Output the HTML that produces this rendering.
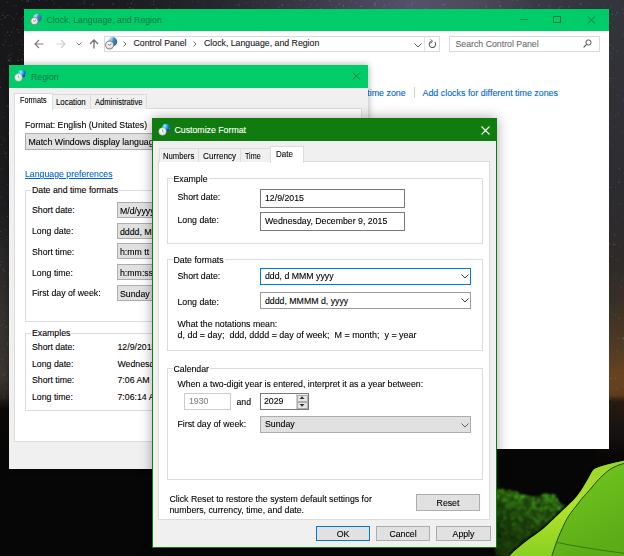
<!DOCTYPE html>
<html><head><meta charset="utf-8">
<style>
*{box-sizing:border-box;margin:0;padding:0}
html,body{width:624px;height:556px;overflow:hidden;background:#060606}
body{position:relative;font-family:"Liberation Sans",sans-serif;font-size:8.75px;color:#000}
.a{position:absolute}
.t{position:absolute;white-space:nowrap;line-height:11px;-webkit-text-stroke:0.1px currentColor}
.gb{position:absolute;border:1px solid #dcdcdc}
.gl{position:absolute;background:#fff;padding:0 1px;line-height:11px;white-space:nowrap}
.cb{position:absolute;border:1px solid #adadad;background:#e1e1e1;overflow:hidden;white-space:nowrap;line-height:15px;padding-left:3px}
.tb{position:absolute;border:1px solid #7a7a7a;background:#fff;white-space:nowrap;line-height:18px;padding-left:4px}
.btn{position:absolute;border:1px solid #adadad;background:#e1e1e1;text-align:center;line-height:14px}
svg{position:absolute;overflow:visible}
.gl,.cb,.tb,.btn{-webkit-text-stroke:0.1px currentColor}
</style></head><body>

<svg width="0" height="0" style="left:0;top:0">
  <defs>
    <radialGradient id="gv" cx="0.3" cy="0.3" r="0.85"><stop offset="0" stop-color="#a8ffff"/><stop offset="0.35" stop-color="#30b8e8"/><stop offset="0.75" stop-color="#2050c8"/><stop offset="1" stop-color="#183a90"/></radialGradient>
    <linearGradient id="gs" x1="0" y1="0.2" x2="1" y2="0.6"><stop offset="0" stop-color="#d0e8f4"/><stop offset="0.4" stop-color="#8ec0e0"/><stop offset="0.55" stop-color="#3a88c0"/><stop offset="1" stop-color="#2a6a9a"/></linearGradient>
    <radialGradient id="gc" cx="0.4" cy="0.35" r="0.7"><stop offset="0" stop-color="#ffffff"/><stop offset="1" stop-color="#d8d8d8"/></radialGradient>
    <linearGradient id="tent" x1="0" y1="0" x2="0.6" y2="1"><stop offset="0" stop-color="#7ccc22"/><stop offset="0.5" stop-color="#6cbe1c"/><stop offset="1" stop-color="#5cac18"/></linearGradient>
    <linearGradient id="ridge" x1="0" y1="0" x2="0" y2="1"><stop offset="0" stop-color="#9ad42a"/><stop offset="0.5" stop-color="#b2e22c"/><stop offset="1" stop-color="#88d020"/></linearGradient>
    <filter id="blur1"><feGaussianBlur stdDeviation="1.2"/></filter><filter id="blur08"><feGaussianBlur stdDeviation="0.7"/></filter><filter id="blur03"><feGaussianBlur stdDeviation="0.35"/></filter><filter id="blur05"><feGaussianBlur stdDeviation="0.5"/></filter>
    <filter id="blur3"><feGaussianBlur stdDeviation="3"/></filter>
  </defs>
</svg>

<!-- ============ background ============ -->
<div class="a" style="left:0;top:0;width:624px;height:40px;background:linear-gradient(90deg,#141418 0%,#1a1a20 18%,#26262e 35%,#3c3a48 50%,#56506a 66%,#4e4a5a 76%,#3a3a46 86%,#30303a 100%)"></div>
<div class="a" style="left:0;top:0;width:24px;height:470px;background:linear-gradient(180deg,#161618 0%,#1e1e20 45%,#2a2828 55%,#36322e 70%,#3c3530 80%,#2e2822 84%,#0c0a08 87%,#060606 100%)"></div>
<div class="a" style="left:596px;top:0;width:28px;height:470px;background:linear-gradient(180deg,#34343c 0%,#2c2c30 40%,#2e2a28 55%,#3a3026 65%,#503a24 74%,#684420 80%,#5e3c1c 84%,#261a10 85.5%,#161210 92%,#080706 97%)"></div>
<svg style="left:0;top:0" width="624" height="556" viewBox="0 0 624 556">
  <path d="M496 491 L505 490 L515 493 L530 497 L545 495 L553 495 L560 504 L570 510 L540 556 L496 556 Z" fill="#1e340e" filter="url(#blur1)"/>
  <g filter="url(#blur1)"><circle cx="520.0" cy="496.7" r="1.6" fill="rgb(32,76,11)"/><circle cx="511.9" cy="492.1" r="1.4" fill="rgb(41,99,14)"/><circle cx="502.7" cy="516.1" r="1.8" fill="rgb(24,57,8)"/><circle cx="512.4" cy="525.5" r="1.0" fill="rgb(30,71,10)"/><circle cx="506.7" cy="494.4" r="1.2" fill="rgb(69,165,24)"/><circle cx="538.3" cy="499.3" r="1.0" fill="rgb(64,154,23)"/><circle cx="500.6" cy="490.2" r="1.1" fill="rgb(66,157,23)"/><circle cx="522.8" cy="503.6" r="1.1" fill="rgb(63,150,22)"/><circle cx="514.1" cy="526.8" r="1.5" fill="rgb(27,64,9)"/><circle cx="550.0" cy="506.4" r="2.0" fill="rgb(30,72,10)"/><circle cx="533.9" cy="497.7" r="1.3" fill="rgb(54,129,19)"/><circle cx="501.7" cy="525.6" r="1.8" fill="rgb(40,97,14)"/><circle cx="519.2" cy="535.4" r="1.6" fill="rgb(30,72,10)"/><circle cx="502.9" cy="505.2" r="1.7" fill="rgb(26,63,9)"/><circle cx="500.5" cy="535.8" r="1.6" fill="rgb(32,78,11)"/><circle cx="556.8" cy="506.2" r="1.3" fill="rgb(59,142,21)"/><circle cx="522.3" cy="529.4" r="1.4" fill="rgb(23,55,8)"/><circle cx="552.8" cy="495.2" r="1.2" fill="rgb(50,119,17)"/><circle cx="508.3" cy="514.5" r="1.2" fill="rgb(25,61,9)"/><circle cx="516.6" cy="515.5" r="1.3" fill="rgb(35,85,12)"/><circle cx="509.0" cy="502.5" r="1.2" fill="rgb(47,113,17)"/><circle cx="516.9" cy="496.3" r="1.5" fill="rgb(59,142,21)"/><circle cx="547.1" cy="522.6" r="1.6" fill="rgb(42,102,15)"/><circle cx="550.7" cy="518.4" r="1.9" fill="rgb(46,111,16)"/><circle cx="555.0" cy="513.9" r="1.3" fill="rgb(27,66,9)"/><circle cx="531.6" cy="514.4" r="1.1" fill="rgb(31,74,11)"/><circle cx="537.9" cy="524.1" r="1.9" fill="rgb(40,95,14)"/><circle cx="497.9" cy="548.1" r="1.6" fill="rgb(18,44,6)"/><circle cx="540.6" cy="519.7" r="1.0" fill="rgb(38,92,13)"/><circle cx="503.6" cy="510.3" r="1.2" fill="rgb(49,118,17)"/><circle cx="506.8" cy="524.6" r="0.9" fill="rgb(33,78,11)"/><circle cx="518.1" cy="531.6" r="1.0" fill="rgb(22,54,8)"/><circle cx="522.3" cy="501.8" r="1.5" fill="rgb(51,122,18)"/><circle cx="520.4" cy="501.8" r="1.8" fill="rgb(63,151,22)"/><circle cx="512.8" cy="522.8" r="1.3" fill="rgb(19,45,6)"/><circle cx="530.9" cy="499.7" r="1.6" fill="rgb(46,109,16)"/><circle cx="523.0" cy="501.7" r="1.1" fill="rgb(36,87,13)"/><circle cx="521.0" cy="520.3" r="2.0" fill="rgb(42,100,15)"/><circle cx="502.3" cy="532.9" r="1.9" fill="rgb(35,85,12)"/><circle cx="548.7" cy="500.2" r="1.9" fill="rgb(49,116,17)"/><circle cx="554.4" cy="509.6" r="1.8" fill="rgb(57,136,20)"/><circle cx="525.3" cy="514.5" r="1.9" fill="rgb(52,124,18)"/><circle cx="507.8" cy="556.5" r="0.9" fill="rgb(30,72,10)"/><circle cx="506.8" cy="544.7" r="2.0" fill="rgb(32,77,11)"/><circle cx="503.6" cy="539.2" r="1.1" fill="rgb(19,47,7)"/><circle cx="557.1" cy="501.0" r="1.2" fill="rgb(44,106,15)"/><circle cx="520.1" cy="524.6" r="1.8" fill="rgb(20,47,7)"/><circle cx="563.3" cy="511.1" r="1.4" fill="rgb(56,135,20)"/><circle cx="505.7" cy="496.8" r="1.5" fill="rgb(48,115,17)"/><circle cx="553.4" cy="496.6" r="1.1" fill="rgb(61,146,22)"/><circle cx="520.1" cy="522.8" r="1.5" fill="rgb(46,109,16)"/><circle cx="500.2" cy="499.6" r="0.9" fill="rgb(30,72,10)"/><circle cx="533.6" cy="525.9" r="1.7" fill="rgb(20,49,7)"/><circle cx="528.8" cy="529.5" r="1.5" fill="rgb(33,79,11)"/><circle cx="510.8" cy="505.7" r="1.5" fill="rgb(59,142,21)"/><circle cx="505.0" cy="517.4" r="1.0" fill="rgb(27,65,9)"/><circle cx="527.7" cy="501.1" r="1.2" fill="rgb(33,79,11)"/><circle cx="506.6" cy="548.7" r="2.0" fill="rgb(20,49,7)"/><circle cx="545.4" cy="501.9" r="1.7" fill="rgb(51,123,18)"/><circle cx="525.9" cy="515.9" r="1.3" fill="rgb(25,60,9)"/><circle cx="537.0" cy="517.3" r="0.9" fill="rgb(34,82,12)"/><circle cx="534.3" cy="507.0" r="2.0" fill="rgb(30,72,10)"/><circle cx="553.6" cy="505.2" r="1.0" fill="rgb(45,109,16)"/><circle cx="535.7" cy="522.5" r="1.4" fill="rgb(31,74,11)"/><circle cx="502.6" cy="490.1" r="1.7" fill="rgb(52,124,18)"/><circle cx="562.3" cy="505.1" r="0.9" fill="rgb(34,81,12)"/><circle cx="521.1" cy="525.3" r="1.9" fill="rgb(26,64,9)"/><circle cx="509.4" cy="552.2" r="1.6" fill="rgb(28,68,10)"/><circle cx="552.2" cy="506.6" r="1.5" fill="rgb(33,78,11)"/><circle cx="516.0" cy="543.1" r="2.0" fill="rgb(15,37,5)"/><circle cx="497.1" cy="538.0" r="1.5" fill="rgb(19,47,7)"/><circle cx="534.1" cy="503.4" r="1.4" fill="rgb(59,140,21)"/><circle cx="556.6" cy="516.7" r="1.4" fill="rgb(39,94,14)"/><circle cx="511.9" cy="502.3" r="1.1" fill="rgb(58,139,20)"/><circle cx="549.9" cy="495.9" r="2.0" fill="rgb(31,75,11)"/><circle cx="545.2" cy="513.0" r="1.5" fill="rgb(34,82,12)"/><circle cx="499.3" cy="499.2" r="1.2" fill="rgb(26,62,9)"/><circle cx="518.9" cy="511.3" r="0.9" fill="rgb(38,92,13)"/><circle cx="502.2" cy="505.8" r="1.6" fill="rgb(34,81,12)"/><circle cx="515.5" cy="492.4" r="1.3" fill="rgb(31,75,11)"/><circle cx="525.2" cy="507.3" r="1.6" fill="rgb(28,68,10)"/><circle cx="539.3" cy="523.6" r="1.7" fill="rgb(42,100,15)"/><circle cx="549.3" cy="521.1" r="1.2" fill="rgb(42,100,15)"/><circle cx="534.8" cy="521.8" r="1.8" fill="rgb(49,117,17)"/><circle cx="497.2" cy="534.7" r="1.8" fill="rgb(33,80,12)"/><circle cx="505.8" cy="511.6" r="1.0" fill="rgb(39,93,13)"/><circle cx="537.3" cy="530.6" r="1.6" fill="rgb(37,89,13)"/><circle cx="514.1" cy="504.7" r="1.4" fill="rgb(27,66,9)"/><circle cx="551.4" cy="521.7" r="1.5" fill="rgb(43,102,15)"/><circle cx="558.6" cy="502.7" r="1.7" fill="rgb(41,98,14)"/><circle cx="532.6" cy="513.2" r="1.4" fill="rgb(52,124,18)"/><circle cx="542.8" cy="500.1" r="1.6" fill="rgb(44,105,15)"/><circle cx="514.8" cy="538.8" r="1.2" fill="rgb(29,71,10)"/><circle cx="505.9" cy="520.3" r="1.4" fill="rgb(40,97,14)"/><circle cx="503.4" cy="501.5" r="1.4" fill="rgb(57,137,20)"/><circle cx="534.2" cy="519.0" r="1.4" fill="rgb(25,61,9)"/><circle cx="531.0" cy="506.6" r="1.0" fill="rgb(49,117,17)"/><circle cx="515.9" cy="500.9" r="1.9" fill="rgb(36,86,13)"/><circle cx="501.5" cy="492.4" r="1.7" fill="rgb(42,100,15)"/><circle cx="513.1" cy="549.7" r="1.4" fill="rgb(15,36,5)"/><circle cx="507.8" cy="553.4" r="1.6" fill="rgb(25,60,9)"/><circle cx="518.3" cy="496.0" r="1.3" fill="rgb(44,107,16)"/><circle cx="504.9" cy="509.5" r="1.3" fill="rgb(35,85,12)"/><circle cx="562.7" cy="506.6" r="1.3" fill="rgb(49,118,17)"/><circle cx="501.7" cy="551.7" r="1.7" fill="rgb(15,38,5)"/><circle cx="507.0" cy="554.9" r="1.4" fill="rgb(23,55,8)"/><circle cx="510.0" cy="512.5" r="2.0" fill="rgb(22,53,8)"/><circle cx="499.7" cy="538.0" r="1.4" fill="rgb(34,83,12)"/><circle cx="506.3" cy="547.7" r="1.4" fill="rgb(29,70,10)"/><circle cx="505.4" cy="519.5" r="1.3" fill="rgb(28,68,10)"/><circle cx="514.9" cy="538.5" r="1.6" fill="rgb(25,60,9)"/><circle cx="544.5" cy="507.4" r="1.5" fill="rgb(42,101,15)"/><circle cx="504.9" cy="531.7" r="1.0" fill="rgb(28,67,10)"/><circle cx="512.3" cy="550.3" r="2.0" fill="rgb(26,63,9)"/><circle cx="527.6" cy="524.9" r="1.2" fill="rgb(24,59,8)"/><circle cx="513.7" cy="504.3" r="1.5" fill="rgb(25,61,9)"/><circle cx="551.5" cy="515.3" r="1.4" fill="rgb(42,102,15)"/><circle cx="511.5" cy="505.2" r="1.7" fill="rgb(46,111,16)"/><circle cx="505.3" cy="521.7" r="1.6" fill="rgb(24,58,8)"/><circle cx="502.9" cy="549.7" r="1.3" fill="rgb(31,76,11)"/><circle cx="531.0" cy="527.7" r="0.9" fill="rgb(30,73,11)"/><circle cx="535.1" cy="519.2" r="1.4" fill="rgb(50,121,18)"/><circle cx="504.1" cy="497.0" r="1.5" fill="rgb(60,143,21)"/><circle cx="504.1" cy="544.6" r="1.7" fill="rgb(35,83,12)"/><circle cx="505.3" cy="526.4" r="0.9" fill="rgb(36,87,13)"/><circle cx="518.5" cy="495.1" r="1.2" fill="rgb(62,148,22)"/><circle cx="528.4" cy="540.2" r="1.0" fill="rgb(22,54,8)"/><circle cx="534.8" cy="527.4" r="1.3" fill="rgb(25,59,8)"/><circle cx="516.6" cy="508.5" r="1.8" fill="rgb(34,82,12)"/><circle cx="531.2" cy="502.7" r="1.2" fill="rgb(47,113,16)"/><circle cx="548.1" cy="507.8" r="0.9" fill="rgb(46,111,16)"/><circle cx="502.0" cy="502.2" r="1.4" fill="rgb(41,99,14)"/><circle cx="521.0" cy="515.9" r="1.7" fill="rgb(29,69,10)"/><circle cx="496.5" cy="506.7" r="1.8" fill="rgb(26,62,9)"/><circle cx="511.2" cy="554.9" r="1.2" fill="rgb(36,87,13)"/><circle cx="510.4" cy="519.0" r="1.2" fill="rgb(29,70,10)"/><circle cx="504.1" cy="530.3" r="1.6" fill="rgb(20,49,7)"/><circle cx="500.2" cy="528.2" r="1.9" fill="rgb(16,40,6)"/><circle cx="511.8" cy="555.2" r="1.1" fill="rgb(15,38,5)"/><circle cx="548.5" cy="499.1" r="1.4" fill="rgb(64,152,22)"/><circle cx="520.4" cy="499.2" r="1.9" fill="rgb(65,155,23)"/><circle cx="530.6" cy="508.1" r="1.7" fill="rgb(42,100,15)"/><circle cx="504.1" cy="491.6" r="1.0" fill="rgb(50,120,18)"/><circle cx="522.4" cy="544.3" r="1.8" fill="rgb(26,62,9)"/><circle cx="502.5" cy="536.1" r="1.1" fill="rgb(29,69,10)"/><circle cx="498.2" cy="515.2" r="1.8" fill="rgb(49,116,17)"/><circle cx="526.0" cy="512.7" r="1.4" fill="rgb(57,135,20)"/><circle cx="521.1" cy="505.3" r="2.0" fill="rgb(53,128,19)"/><circle cx="499.2" cy="539.0" r="1.7" fill="rgb(22,52,7)"/><circle cx="518.0" cy="537.2" r="1.6" fill="rgb(36,86,12)"/><circle cx="497.8" cy="502.6" r="1.4" fill="rgb(46,109,16)"/><circle cx="514.6" cy="516.5" r="1.4" fill="rgb(39,93,14)"/><circle cx="509.5" cy="543.0" r="1.7" fill="rgb(36,87,13)"/><circle cx="547.2" cy="496.7" r="1.2" fill="rgb(45,107,16)"/><circle cx="540.1" cy="522.3" r="1.3" fill="rgb(25,59,8)"/><circle cx="498.5" cy="525.2" r="1.3" fill="rgb(29,70,10)"/><circle cx="503.1" cy="521.4" r="1.7" fill="rgb(32,77,11)"/><circle cx="508.8" cy="495.4" r="1.4" fill="rgb(62,147,22)"/><circle cx="513.4" cy="524.2" r="1.8" fill="rgb(42,100,15)"/><circle cx="505.0" cy="545.7" r="1.2" fill="rgb(29,71,10)"/><circle cx="515.8" cy="504.0" r="1.2" fill="rgb(45,108,16)"/><circle cx="514.3" cy="503.4" r="1.1" fill="rgb(52,124,18)"/><circle cx="509.9" cy="490.6" r="1.2" fill="rgb(42,102,15)"/><circle cx="533.5" cy="502.4" r="1.8" fill="rgb(59,141,21)"/><circle cx="496.3" cy="548.7" r="1.2" fill="rgb(26,63,9)"/><circle cx="517.7" cy="494.5" r="1.1" fill="rgb(72,173,26)"/><circle cx="529.2" cy="504.5" r="1.8" fill="rgb(26,63,9)"/><circle cx="503.8" cy="528.3" r="1.6" fill="rgb(21,50,7)"/><circle cx="498.8" cy="510.1" r="0.9" fill="rgb(32,77,11)"/><circle cx="498.8" cy="538.0" r="1.9" fill="rgb(36,87,13)"/><circle cx="496.8" cy="509.2" r="1.6" fill="rgb(30,71,10)"/><circle cx="498.3" cy="521.2" r="1.4" fill="rgb(31,75,11)"/><circle cx="503.5" cy="514.1" r="1.5" fill="rgb(44,105,15)"/><circle cx="535.5" cy="532.4" r="1.3" fill="rgb(23,57,8)"/><circle cx="526.3" cy="506.1" r="1.2" fill="rgb(27,66,9)"/><circle cx="519.1" cy="526.2" r="1.3" fill="rgb(30,73,11)"/><circle cx="497.3" cy="540.4" r="1.8" fill="rgb(31,76,11)"/><circle cx="510.6" cy="537.7" r="1.1" fill="rgb(14,35,5)"/><circle cx="528.1" cy="497.1" r="1.0" fill="rgb(33,80,12)"/><circle cx="530.1" cy="497.5" r="0.9" fill="rgb(58,139,20)"/><circle cx="506.5" cy="543.3" r="1.3" fill="rgb(30,71,10)"/><circle cx="542.0" cy="512.3" r="1.5" fill="rgb(29,69,10)"/><circle cx="521.7" cy="497.5" r="1.1" fill="rgb(31,75,11)"/><circle cx="504.1" cy="520.8" r="1.8" fill="rgb(44,106,15)"/><circle cx="510.6" cy="495.0" r="1.9" fill="rgb(52,125,18)"/><circle cx="519.3" cy="529.1" r="1.6" fill="rgb(19,45,6)"/><circle cx="554.2" cy="501.8" r="1.3" fill="rgb(37,88,13)"/><circle cx="512.1" cy="514.4" r="1.5" fill="rgb(36,85,12)"/><circle cx="522.6" cy="496.6" r="2.0" fill="rgb(71,170,25)"/><circle cx="498.8" cy="545.5" r="1.0" fill="rgb(30,73,10)"/><circle cx="518.8" cy="503.7" r="1.3" fill="rgb(43,102,15)"/><circle cx="529.1" cy="517.1" r="0.9" fill="rgb(46,111,16)"/><circle cx="529.1" cy="529.9" r="1.8" fill="rgb(22,53,8)"/><circle cx="556.0" cy="514.4" r="1.0" fill="rgb(38,92,13)"/><circle cx="528.7" cy="522.2" r="0.9" fill="rgb(43,102,15)"/><circle cx="505.6" cy="551.5" r="1.2" fill="rgb(34,81,12)"/><circle cx="533.3" cy="512.8" r="1.9" fill="rgb(29,69,10)"/><circle cx="497.9" cy="490.7" r="1.6" fill="rgb(66,158,23)"/><circle cx="556.3" cy="499.8" r="2.0" fill="rgb(55,131,19)"/><circle cx="517.3" cy="543.6" r="1.8" fill="rgb(32,78,11)"/><circle cx="500.8" cy="510.9" r="1.7" fill="rgb(28,66,10)"/><circle cx="520.0" cy="529.6" r="1.9" fill="rgb(30,71,10)"/><circle cx="506.6" cy="521.7" r="1.9" fill="rgb(24,58,8)"/><circle cx="539.8" cy="529.7" r="1.2" fill="rgb(28,67,10)"/><circle cx="498.7" cy="498.9" r="1.1" fill="rgb(39,94,14)"/><circle cx="508.5" cy="541.7" r="1.0" fill="rgb(28,68,10)"/><circle cx="499.6" cy="546.9" r="2.0" fill="rgb(26,63,9)"/><circle cx="537.1" cy="527.2" r="1.9" fill="rgb(21,50,7)"/><circle cx="514.7" cy="524.0" r="1.8" fill="rgb(42,100,15)"/><circle cx="555.0" cy="504.8" r="2.0" fill="rgb(54,130,19)"/><circle cx="506.8" cy="509.5" r="1.0" fill="rgb(31,75,11)"/><circle cx="509.1" cy="538.8" r="1.0" fill="rgb(36,87,13)"/><circle cx="534.2" cy="508.0" r="2.0" fill="rgb(51,123,18)"/><circle cx="512.4" cy="506.7" r="1.6" fill="rgb(42,100,15)"/><circle cx="505.8" cy="502.1" r="1.6" fill="rgb(25,61,9)"/><circle cx="500.0" cy="526.3" r="1.2" fill="rgb(31,75,11)"/><circle cx="522.4" cy="501.9" r="1.5" fill="rgb(55,132,19)"/><circle cx="505.9" cy="512.0" r="1.8" fill="rgb(27,65,9)"/><circle cx="506.0" cy="552.5" r="1.2" fill="rgb(18,44,6)"/><circle cx="506.7" cy="533.2" r="1.2" fill="rgb(36,86,12)"/><circle cx="543.7" cy="525.9" r="1.3" fill="rgb(39,93,14)"/><circle cx="538.8" cy="528.7" r="1.5" fill="rgb(32,78,11)"/><circle cx="514.4" cy="550.1" r="0.9" fill="rgb(28,69,10)"/><circle cx="497.9" cy="499.2" r="1.1" fill="rgb(63,151,22)"/><circle cx="503.8" cy="529.5" r="1.6" fill="rgb(20,48,7)"/><circle cx="506.5" cy="500.2" r="1.6" fill="rgb(49,117,17)"/><circle cx="543.9" cy="515.5" r="1.6" fill="rgb(42,100,15)"/><circle cx="518.9" cy="507.3" r="1.0" fill="rgb(56,135,20)"/><circle cx="496.5" cy="546.0" r="1.7" fill="rgb(27,64,9)"/><circle cx="502.0" cy="532.5" r="1.1" fill="rgb(17,41,6)"/><circle cx="515.3" cy="531.7" r="1.0" fill="rgb(35,85,12)"/><circle cx="502.3" cy="522.0" r="1.1" fill="rgb(25,60,9)"/><circle cx="507.8" cy="551.0" r="1.1" fill="rgb(24,59,8)"/><circle cx="520.3" cy="503.0" r="1.9" fill="rgb(56,133,20)"/><circle cx="530.9" cy="523.7" r="0.9" fill="rgb(20,48,7)"/><circle cx="528.4" cy="537.4" r="1.5" fill="rgb(22,54,8)"/><circle cx="554.4" cy="513.8" r="1.5" fill="rgb(46,111,16)"/><circle cx="498.0" cy="493.6" r="1.9" fill="rgb(46,110,16)"/><circle cx="498.3" cy="495.8" r="1.6" fill="rgb(29,70,10)"/><circle cx="500.9" cy="527.9" r="1.3" fill="rgb(38,92,13)"/><circle cx="524.4" cy="503.5" r="1.1" fill="rgb(27,66,9)"/><circle cx="498.5" cy="546.2" r="1.8" fill="rgb(31,75,11)"/><circle cx="502.5" cy="539.4" r="1.6" fill="rgb(27,65,9)"/><circle cx="503.4" cy="492.9" r="1.7" fill="rgb(38,92,13)"/><circle cx="517.8" cy="509.9" r="1.2" fill="rgb(38,90,13)"/><circle cx="515.0" cy="506.1" r="1.7" fill="rgb(41,97,14)"/><circle cx="540.5" cy="519.8" r="1.2" fill="rgb(48,115,17)"/><circle cx="498.3" cy="515.3" r="1.4" fill="rgb(48,116,17)"/><circle cx="503.3" cy="519.3" r="1.0" fill="rgb(37,90,13)"/><circle cx="512.0" cy="547.2" r="1.0" fill="rgb(36,87,13)"/><circle cx="517.2" cy="517.0" r="1.5" fill="rgb(31,75,11)"/><circle cx="496.3" cy="520.8" r="1.4" fill="rgb(44,107,16)"/><circle cx="534.1" cy="527.0" r="1.1" fill="rgb(45,107,16)"/><circle cx="511.9" cy="535.7" r="1.4" fill="rgb(17,42,6)"/><circle cx="551.1" cy="516.0" r="1.6" fill="rgb(36,86,12)"/><circle cx="511.3" cy="504.7" r="1.9" fill="rgb(47,112,16)"/><circle cx="508.7" cy="555.8" r="1.6" fill="rgb(26,64,9)"/><circle cx="505.4" cy="528.2" r="1.7" fill="rgb(32,77,11)"/><circle cx="543.8" cy="510.7" r="1.3" fill="rgb(30,71,10)"/><circle cx="537.0" cy="509.0" r="1.4" fill="rgb(55,132,19)"/><circle cx="505.3" cy="518.8" r="1.9" fill="rgb(26,64,9)"/><circle cx="533.6" cy="505.0" r="1.7" fill="rgb(65,156,23)"/><circle cx="507.5" cy="503.6" r="1.3" fill="rgb(47,114,17)"/><circle cx="521.8" cy="502.8" r="2.0" fill="rgb(38,92,13)"/><circle cx="503.5" cy="554.3" r="1.0" fill="rgb(24,59,8)"/><circle cx="507.2" cy="496.5" r="1.2" fill="rgb(42,100,15)"/><circle cx="528.2" cy="499.9" r="1.6" fill="rgb(33,79,11)"/><circle cx="516.8" cy="548.9" r="1.4" fill="rgb(14,35,5)"/><circle cx="525.5" cy="542.2" r="1.7" fill="rgb(28,67,10)"/><circle cx="497.6" cy="504.3" r="1.7" fill="rgb(24,58,8)"/><circle cx="527.8" cy="526.8" r="1.7" fill="rgb(32,76,11)"/><circle cx="543.5" cy="527.4" r="1.2" fill="rgb(23,55,8)"/><circle cx="543.5" cy="518.2" r="1.2" fill="rgb(44,106,16)"/><circle cx="513.9" cy="514.4" r="1.7" fill="rgb(27,65,9)"/><circle cx="514.5" cy="516.1" r="1.4" fill="rgb(44,105,15)"/><circle cx="562.2" cy="509.3" r="0.9" fill="rgb(52,125,18)"/><circle cx="514.6" cy="501.5" r="1.7" fill="rgb(35,84,12)"/><circle cx="538.5" cy="524.4" r="1.7" fill="rgb(36,86,13)"/><circle cx="497.2" cy="542.3" r="1.3" fill="rgb(23,56,8)"/><circle cx="511.5" cy="534.6" r="1.3" fill="rgb(35,83,12)"/><circle cx="541.4" cy="531.3" r="1.2" fill="rgb(27,65,9)"/><circle cx="527.0" cy="515.9" r="1.7" fill="rgb(36,86,13)"/><circle cx="518.5" cy="514.4" r="1.9" fill="rgb(30,72,10)"/><circle cx="530.2" cy="497.7" r="1.9" fill="rgb(32,77,11)"/><circle cx="530.7" cy="525.9" r="1.1" fill="rgb(23,56,8)"/><circle cx="522.1" cy="531.4" r="1.8" fill="rgb(39,94,14)"/><circle cx="553.7" cy="519.3" r="1.8" fill="rgb(29,70,10)"/><circle cx="515.8" cy="512.7" r="1.2" fill="rgb(39,93,14)"/><circle cx="546.2" cy="520.2" r="1.8" fill="rgb(49,117,17)"/><circle cx="516.8" cy="503.4" r="1.2" fill="rgb(48,114,17)"/><circle cx="531.9" cy="530.3" r="1.0" fill="rgb(28,67,10)"/><circle cx="507.3" cy="507.5" r="1.3" fill="rgb(26,63,9)"/><circle cx="554.0" cy="496.0" r="1.8" fill="rgb(63,151,22)"/><circle cx="539.1" cy="532.7" r="1.1" fill="rgb(17,42,6)"/><circle cx="544.5" cy="503.8" r="1.0" fill="rgb(32,78,11)"/><circle cx="511.4" cy="514.6" r="1.5" fill="rgb(44,106,15)"/><circle cx="547.3" cy="523.7" r="1.7" fill="rgb(33,80,12)"/><circle cx="545.7" cy="494.3" r="1.0" fill="rgb(52,124,18)"/><circle cx="513.3" cy="495.9" r="1.4" fill="rgb(30,73,11)"/><circle cx="547.8" cy="503.5" r="1.1" fill="rgb(54,130,19)"/><circle cx="537.6" cy="533.2" r="1.8" fill="rgb(26,62,9)"/><circle cx="546.0" cy="498.8" r="1.3" fill="rgb(60,144,21)"/><circle cx="498.1" cy="529.3" r="1.7" fill="rgb(24,58,8)"/><circle cx="506.7" cy="501.1" r="1.4" fill="rgb(31,74,11)"/><circle cx="521.1" cy="547.2" r="1.3" fill="rgb(27,65,9)"/><circle cx="563.5" cy="506.2" r="1.3" fill="rgb(42,102,15)"/><circle cx="517.7" cy="544.8" r="1.3" fill="rgb(28,67,10)"/><circle cx="521.5" cy="500.5" r="1.4" fill="rgb(33,78,11)"/><circle cx="520.5" cy="508.5" r="1.2" fill="rgb(50,119,17)"/><circle cx="537.0" cy="514.8" r="1.5" fill="rgb(38,92,13)"/><circle cx="510.1" cy="551.4" r="1.6" fill="rgb(32,77,11)"/><circle cx="500.5" cy="521.6" r="1.5" fill="rgb(30,72,10)"/><circle cx="541.6" cy="530.5" r="1.7" fill="rgb(34,82,12)"/><circle cx="498.9" cy="531.0" r="1.6" fill="rgb(19,46,6)"/><circle cx="503.5" cy="498.9" r="0.9" fill="rgb(63,150,22)"/><circle cx="503.4" cy="552.1" r="0.9" fill="rgb(36,87,13)"/><circle cx="506.3" cy="508.0" r="1.7" fill="rgb(35,84,12)"/><circle cx="497.5" cy="526.2" r="1.5" fill="rgb(17,42,6)"/><circle cx="532.8" cy="523.1" r="1.8" fill="rgb(47,113,16)"/><circle cx="497.0" cy="513.5" r="1.6" fill="rgb(46,110,16)"/><circle cx="543.7" cy="501.1" r="1.1" fill="rgb(27,65,9)"/><circle cx="505.0" cy="519.5" r="1.2" fill="rgb(37,89,13)"/><circle cx="513.9" cy="538.1" r="1.1" fill="rgb(15,38,5)"/><circle cx="523.1" cy="539.1" r="1.7" fill="rgb(18,44,6)"/><circle cx="497.1" cy="532.2" r="1.8" fill="rgb(16,40,6)"/><circle cx="524.8" cy="508.2" r="1.6" fill="rgb(46,111,16)"/><circle cx="541.1" cy="508.5" r="1.9" fill="rgb(57,136,20)"/><circle cx="528.5" cy="534.1" r="1.1" fill="rgb(38,91,13)"/><circle cx="504.6" cy="553.7" r="1.1" fill="rgb(36,86,12)"/><circle cx="526.9" cy="513.4" r="1.8" fill="rgb(34,81,12)"/><circle cx="557.2" cy="509.6" r="1.6" fill="rgb(26,62,9)"/><circle cx="518.8" cy="516.4" r="1.9" fill="rgb(35,84,12)"/><circle cx="524.7" cy="512.7" r="1.7" fill="rgb(32,77,11)"/><circle cx="555.8" cy="506.1" r="0.9" fill="rgb(39,93,13)"/><circle cx="515.8" cy="497.2" r="1.9" fill="rgb(66,158,23)"/><circle cx="516.3" cy="546.4" r="1.8" fill="rgb(32,78,11)"/><circle cx="535.6" cy="524.3" r="1.4" fill="rgb(32,76,11)"/><circle cx="510.8" cy="539.3" r="1.9" fill="rgb(20,49,7)"/><circle cx="525.3" cy="536.3" r="1.9" fill="rgb(30,72,10)"/><circle cx="513.2" cy="527.2" r="1.9" fill="rgb(32,77,11)"/><circle cx="519.8" cy="521.9" r="1.1" fill="rgb(26,63,9)"/><circle cx="510.2" cy="498.8" r="1.7" fill="rgb(44,105,15)"/><circle cx="538.8" cy="511.5" r="1.8" fill="rgb(30,71,10)"/><circle cx="514.2" cy="551.5" r="1.4" fill="rgb(17,41,6)"/><circle cx="523.5" cy="518.9" r="1.0" fill="rgb(32,77,11)"/><circle cx="540.2" cy="510.5" r="1.5" fill="rgb(24,58,8)"/><circle cx="503.0" cy="500.5" r="1.9" fill="rgb(51,123,18)"/><circle cx="532.0" cy="526.3" r="1.2" fill="rgb(44,106,15)"/><circle cx="516.7" cy="492.9" r="1.4" fill="rgb(61,146,21)"/><circle cx="510.9" cy="498.8" r="1.0" fill="rgb(29,69,10)"/><circle cx="498.6" cy="512.2" r="1.7" fill="rgb(40,96,14)"/><circle cx="500.7" cy="528.5" r="1.3" fill="rgb(18,44,6)"/><circle cx="519.6" cy="502.6" r="1.0" fill="rgb(58,138,20)"/><circle cx="533.5" cy="499.0" r="1.8" fill="rgb(47,113,17)"/><circle cx="514.9" cy="511.0" r="1.9" fill="rgb(23,56,8)"/><circle cx="500.1" cy="496.3" r="1.7" fill="rgb(37,88,13)"/><circle cx="546.1" cy="507.2" r="1.6" fill="rgb(59,141,21)"/><circle cx="544.3" cy="519.4" r="1.3" fill="rgb(34,82,12)"/><circle cx="505.2" cy="520.2" r="1.1" fill="rgb(26,62,9)"/><circle cx="507.6" cy="545.1" r="1.0" fill="rgb(31,74,11)"/><circle cx="506.3" cy="517.8" r="1.0" fill="rgb(32,78,11)"/><circle cx="529.5" cy="510.1" r="1.8" fill="rgb(45,109,16)"/><circle cx="504.6" cy="512.0" r="1.3" fill="rgb(49,119,17)"/><circle cx="500.2" cy="536.7" r="1.5" fill="rgb(18,44,6)"/><circle cx="528.5" cy="496.6" r="1.4" fill="rgb(42,100,15)"/><circle cx="507.5" cy="505.2" r="1.8" fill="rgb(38,91,13)"/><circle cx="555.5" cy="504.5" r="1.0" fill="rgb(49,117,17)"/><circle cx="511.6" cy="519.9" r="1.2" fill="rgb(27,66,9)"/><circle cx="528.0" cy="504.6" r="1.2" fill="rgb(37,89,13)"/><circle cx="503.2" cy="506.5" r="1.9" fill="rgb(25,61,9)"/><circle cx="506.7" cy="531.4" r="1.4" fill="rgb(28,67,10)"/><circle cx="521.2" cy="496.0" r="0.9" fill="rgb(56,134,20)"/><circle cx="517.2" cy="511.6" r="0.9" fill="rgb(39,94,14)"/><circle cx="512.2" cy="526.6" r="1.1" fill="rgb(22,52,7)"/><circle cx="534.6" cy="502.4" r="1.1" fill="rgb(56,135,20)"/><circle cx="501.9" cy="492.2" r="1.6" fill="rgb(54,129,19)"/><circle cx="552.3" cy="498.4" r="1.1" fill="rgb(62,148,22)"/><circle cx="539.1" cy="500.4" r="1.0" fill="rgb(64,153,23)"/><circle cx="521.7" cy="506.0" r="1.6" fill="rgb(48,114,17)"/><circle cx="502.7" cy="515.1" r="1.7" fill="rgb(25,60,9)"/><circle cx="560.5" cy="504.9" r="1.1" fill="rgb(48,115,17)"/><circle cx="498.7" cy="535.9" r="1.5" fill="rgb(14,35,5)"/><circle cx="522.4" cy="503.4" r="1.8" fill="rgb(41,99,14)"/><circle cx="517.6" cy="493.6" r="1.7" fill="rgb(53,127,19)"/><circle cx="534.0" cy="523.7" r="1.5" fill="rgb(19,47,7)"/><circle cx="514.0" cy="492.3" r="1.6" fill="rgb(38,91,13)"/><circle cx="503.6" cy="503.8" r="1.8" fill="rgb(25,60,9)"/><circle cx="497.4" cy="551.8" r="1.7" fill="rgb(21,51,7)"/><circle cx="497.3" cy="528.6" r="1.5" fill="rgb(30,71,10)"/><circle cx="513.6" cy="517.5" r="1.3" fill="rgb(23,56,8)"/><circle cx="505.1" cy="521.0" r="1.5" fill="rgb(27,64,9)"/><circle cx="504.1" cy="494.6" r="1.9" fill="rgb(55,131,19)"/><circle cx="506.9" cy="526.7" r="1.7" fill="rgb(20,49,7)"/><circle cx="540.2" cy="528.8" r="0.9" fill="rgb(18,44,6)"/><circle cx="553.5" cy="510.0" r="1.2" fill="rgb(38,91,13)"/><circle cx="519.7" cy="514.4" r="1.5" fill="rgb(34,82,12)"/><circle cx="527.2" cy="530.9" r="1.3" fill="rgb(32,77,11)"/><circle cx="509.9" cy="509.0" r="1.1" fill="rgb(50,120,18)"/><circle cx="497.5" cy="495.9" r="2.0" fill="rgb(66,158,23)"/><circle cx="499.5" cy="555.6" r="2.0" fill="rgb(15,37,5)"/><circle cx="498.5" cy="531.6" r="1.2" fill="rgb(32,78,11)"/><circle cx="542.1" cy="530.6" r="1.8" fill="rgb(17,41,6)"/><circle cx="542.0" cy="503.8" r="1.5" fill="rgb(46,111,16)"/><circle cx="504.4" cy="510.7" r="1.1" fill="rgb(24,57,8)"/><circle cx="534.0" cy="505.1" r="1.4" fill="rgb(51,123,18)"/><circle cx="516.3" cy="538.3" r="1.7" fill="rgb(22,53,7)"/><circle cx="538.2" cy="532.2" r="1.1" fill="rgb(36,87,13)"/><circle cx="518.5" cy="519.9" r="1.8" fill="rgb(20,49,7)"/><circle cx="513.9" cy="501.7" r="1.5" fill="rgb(44,105,15)"/><circle cx="520.1" cy="505.2" r="1.9" fill="rgb(35,83,12)"/><circle cx="517.9" cy="540.8" r="1.1" fill="rgb(16,39,5)"/><circle cx="540.8" cy="510.7" r="1.6" fill="rgb(46,110,16)"/><circle cx="524.7" cy="517.2" r="1.7" fill="rgb(25,60,9)"/><circle cx="526.8" cy="533.4" r="1.1" fill="rgb(21,50,7)"/><circle cx="552.2" cy="519.7" r="1.8" fill="rgb(46,110,16)"/><circle cx="526.4" cy="525.0" r="1.0" fill="rgb(32,76,11)"/><circle cx="526.9" cy="541.6" r="1.9" fill="rgb(30,73,11)"/><circle cx="504.2" cy="546.5" r="1.7" fill="rgb(22,53,7)"/><circle cx="549.5" cy="506.8" r="1.3" fill="rgb(50,120,18)"/><circle cx="540.1" cy="532.0" r="0.9" fill="rgb(37,89,13)"/><circle cx="528.9" cy="499.1" r="1.2" fill="rgb(35,85,12)"/><circle cx="528.2" cy="512.8" r="1.2" fill="rgb(58,139,20)"/><circle cx="564.1" cy="509.0" r="1.8" fill="rgb(41,98,14)"/><circle cx="537.8" cy="521.3" r="1.9" fill="rgb(48,115,17)"/><circle cx="519.1" cy="530.0" r="1.4" fill="rgb(40,96,14)"/><circle cx="534.3" cy="534.7" r="1.3" fill="rgb(25,60,9)"/><circle cx="499.0" cy="534.0" r="1.4" fill="rgb(14,35,5)"/><circle cx="546.1" cy="523.3" r="1.0" fill="rgb(31,75,11)"/><circle cx="533.1" cy="532.0" r="1.9" fill="rgb(20,49,7)"/><circle cx="532.0" cy="517.3" r="1.6" fill="rgb(45,107,16)"/><circle cx="521.4" cy="523.6" r="1.8" fill="rgb(24,58,8)"/><circle cx="522.8" cy="512.0" r="1.0" fill="rgb(36,85,12)"/><circle cx="507.6" cy="506.6" r="1.5" fill="rgb(45,107,16)"/><circle cx="500.5" cy="526.1" r="1.0" fill="rgb(33,78,11)"/><circle cx="499.1" cy="515.2" r="1.8" fill="rgb(31,75,11)"/><circle cx="548.6" cy="525.3" r="1.9" fill="rgb(31,74,11)"/><circle cx="545.4" cy="500.0" r="1.4" fill="rgb(55,131,19)"/><circle cx="506.6" cy="500.1" r="1.6" fill="rgb(32,77,11)"/><circle cx="507.6" cy="539.9" r="1.0" fill="rgb(17,41,6)"/><circle cx="501.6" cy="553.3" r="1.4" fill="rgb(27,64,9)"/><circle cx="553.0" cy="508.9" r="1.7" fill="rgb(39,95,14)"/><circle cx="510.2" cy="530.3" r="0.9" fill="rgb(21,50,7)"/><circle cx="541.9" cy="503.7" r="0.9" fill="rgb(54,129,19)"/><circle cx="559.2" cy="508.4" r="1.9" fill="rgb(68,162,24)"/><circle cx="529.7" cy="515.7" r="1.2" fill="rgb(42,101,15)"/><circle cx="539.3" cy="515.4" r="1.3" fill="rgb(51,121,18)"/><circle cx="514.0" cy="498.3" r="1.3" fill="rgb(36,86,12)"/><circle cx="496.6" cy="548.6" r="1.3" fill="rgb(24,58,8)"/><circle cx="504.5" cy="523.9" r="1.3" fill="rgb(29,69,10)"/><circle cx="537.0" cy="513.5" r="1.4" fill="rgb(37,89,13)"/><circle cx="545.2" cy="510.2" r="1.1" fill="rgb(54,129,19)"/><circle cx="505.6" cy="499.9" r="1.5" fill="rgb(62,149,22)"/><circle cx="505.5" cy="517.5" r="1.8" fill="rgb(47,113,17)"/><circle cx="513.8" cy="512.1" r="1.1" fill="rgb(38,91,13)"/><circle cx="511.4" cy="553.5" r="1.5" fill="rgb(20,49,7)"/><circle cx="540.1" cy="517.3" r="2.0" fill="rgb(42,100,15)"/><circle cx="514.2" cy="529.2" r="1.1" fill="rgb(37,90,13)"/><circle cx="505.1" cy="522.4" r="1.5" fill="rgb(25,61,9)"/><circle cx="498.1" cy="537.0" r="1.1" fill="rgb(14,35,5)"/><circle cx="509.1" cy="546.4" r="1.3" fill="rgb(32,77,11)"/><circle cx="552.1" cy="499.7" r="1.7" fill="rgb(32,76,11)"/><circle cx="512.8" cy="495.0" r="1.7" fill="rgb(43,102,15)"/><circle cx="522.3" cy="545.9" r="1.4" fill="rgb(31,75,11)"/><circle cx="505.8" cy="505.6" r="0.9" fill="rgb(52,125,18)"/><circle cx="548.1" cy="518.8" r="2.0" fill="rgb(35,84,12)"/><circle cx="522.1" cy="530.6" r="1.1" fill="rgb(19,46,6)"/><circle cx="516.0" cy="529.2" r="1.1" fill="rgb(36,85,12)"/><circle cx="508.0" cy="500.1" r="1.2" fill="rgb(43,104,15)"/><circle cx="537.8" cy="502.2" r="1.4" fill="rgb(52,125,18)"/><circle cx="514.8" cy="516.9" r="1.7" fill="rgb(33,79,11)"/><circle cx="498.7" cy="508.6" r="1.8" fill="rgb(37,88,13)"/><circle cx="547.4" cy="513.9" r="1.7" fill="rgb(31,74,11)"/><circle cx="542.5" cy="518.1" r="1.0" fill="rgb(47,113,17)"/><circle cx="511.2" cy="533.8" r="1.8" fill="rgb(35,84,12)"/><circle cx="505.4" cy="540.1" r="0.9" fill="rgb(33,79,11)"/><circle cx="508.9" cy="497.6" r="1.8" fill="rgb(38,91,13)"/><circle cx="536.3" cy="503.7" r="1.0" fill="rgb(43,104,15)"/><circle cx="543.1" cy="495.7" r="1.7" fill="rgb(55,131,19)"/><circle cx="545.6" cy="502.9" r="1.2" fill="rgb(51,121,18)"/><circle cx="547.2" cy="495.5" r="1.6" fill="rgb(66,158,23)"/><circle cx="518.2" cy="548.8" r="1.1" fill="rgb(29,71,10)"/><circle cx="513.8" cy="530.7" r="1.0" fill="rgb(27,65,9)"/><circle cx="552.3" cy="498.0" r="1.6" fill="rgb(59,140,21)"/><circle cx="526.1" cy="500.6" r="1.7" fill="rgb(28,66,10)"/><circle cx="522.7" cy="500.7" r="1.0" fill="rgb(41,97,14)"/><circle cx="518.5" cy="493.9" r="1.2" fill="rgb(35,84,12)"/><circle cx="507.9" cy="517.6" r="1.5" fill="rgb(29,71,10)"/><circle cx="508.4" cy="491.1" r="0.9" fill="rgb(69,165,24)"/><circle cx="520.5" cy="538.5" r="1.2" fill="rgb(31,76,11)"/><circle cx="532.2" cy="516.8" r="1.1" fill="rgb(43,104,15)"/><circle cx="519.8" cy="511.5" r="1.0" fill="rgb(34,83,12)"/><circle cx="544.3" cy="503.9" r="1.2" fill="rgb(32,77,11)"/><circle cx="525.3" cy="496.3" r="1.3" fill="rgb(62,149,22)"/><circle cx="549.2" cy="508.0" r="1.6" fill="rgb(41,98,14)"/><circle cx="509.7" cy="544.6" r="1.3" fill="rgb(24,58,8)"/><circle cx="506.1" cy="551.3" r="1.8" fill="rgb(21,51,7)"/><circle cx="537.9" cy="530.6" r="1.8" fill="rgb(38,90,13)"/><circle cx="512.0" cy="516.0" r="1.7" fill="rgb(31,75,11)"/><circle cx="540.6" cy="530.5" r="1.1" fill="rgb(23,55,8)"/><circle cx="508.1" cy="517.5" r="2.0" fill="rgb(22,54,8)"/><circle cx="531.5" cy="501.5" r="1.3" fill="rgb(29,69,10)"/><circle cx="554.2" cy="516.2" r="1.2" fill="rgb(48,116,17)"/><circle cx="500.1" cy="536.5" r="1.9" fill="rgb(16,39,5)"/><circle cx="528.5" cy="533.3" r="1.8" fill="rgb(36,87,13)"/><circle cx="508.2" cy="507.0" r="1.4" fill="rgb(47,113,17)"/><circle cx="546.0" cy="526.3" r="1.4" fill="rgb(35,84,12)"/><circle cx="520.0" cy="518.7" r="2.0" fill="rgb(43,104,15)"/><circle cx="518.0" cy="526.5" r="1.9" fill="rgb(32,77,11)"/><circle cx="544.6" cy="495.7" r="1.9" fill="rgb(57,135,20)"/><circle cx="510.0" cy="534.2" r="1.4" fill="rgb(16,40,6)"/><circle cx="506.9" cy="527.1" r="1.5" fill="rgb(28,66,10)"/><circle cx="522.6" cy="503.1" r="1.4" fill="rgb(38,92,13)"/><circle cx="504.5" cy="498.8" r="1.9" fill="rgb(52,124,18)"/><circle cx="551.5" cy="501.7" r="1.8" fill="rgb(58,140,21)"/><circle cx="503.0" cy="523.7" r="1.2" fill="rgb(32,76,11)"/><circle cx="512.8" cy="518.5" r="1.5" fill="rgb(44,106,16)"/><circle cx="504.4" cy="522.4" r="1.5" fill="rgb(20,47,7)"/><circle cx="533.2" cy="522.0" r="1.8" fill="rgb(24,57,8)"/><circle cx="534.1" cy="518.7" r="1.7" fill="rgb(42,100,15)"/><circle cx="508.7" cy="554.2" r="1.5" fill="rgb(35,84,12)"/><circle cx="502.9" cy="512.5" r="1.6" fill="rgb(36,87,13)"/><circle cx="513.5" cy="512.4" r="0.9" fill="rgb(46,109,16)"/><circle cx="504.9" cy="495.6" r="1.9" fill="rgb(31,75,11)"/><circle cx="551.2" cy="510.2" r="1.7" fill="rgb(53,127,19)"/><circle cx="496.9" cy="504.1" r="1.2" fill="rgb(47,112,16)"/><circle cx="504.4" cy="551.7" r="1.6" fill="rgb(21,51,7)"/><circle cx="522.2" cy="535.3" r="0.9" fill="rgb(30,72,10)"/></g>
  <path d="M626.0,460.2 C623.3,460.8 614.5,462.6 609.6,463.9 C604.7,465.2 599.5,466.8 596.7,467.9 C593.9,469.0 594.1,469.1 592.8,470.8 C591.5,472.5 590.4,475.0 588.8,477.8 C587.1,480.6 585.2,484.2 582.9,487.7 C580.6,491.2 578.4,494.8 575.0,498.6 C571.6,502.4 567.9,505.6 562.7,510.6 C557.5,515.6 549.7,523.5 543.7,528.5 C537.7,533.5 531.7,537.1 526.8,540.9 C521.9,544.6 517.5,548.3 514.5,551.0 C511.5,553.7 509.9,556.0 509.0,557.0  L626,557 Z" fill="#000" opacity="0.9" filter="url(#blur1)" transform="translate(-1.5,-1)"/>
  <path d="M626.0,460.2 C623.3,460.8 614.5,462.6 609.6,463.9 C604.7,465.2 599.5,466.8 596.7,467.9 C593.9,469.0 594.1,469.1 592.8,470.8 C591.5,472.5 590.4,475.0 588.8,477.8 C587.1,480.6 585.2,484.2 582.9,487.7 C580.6,491.2 578.4,494.8 575.0,498.6 C571.6,502.4 567.9,505.6 562.7,510.6 C557.5,515.6 549.7,523.5 543.7,528.5 C537.7,533.5 531.7,537.1 526.8,540.9 C521.9,544.6 517.5,548.3 514.5,551.0 C511.5,553.7 509.9,556.0 509.0,557.0  L626,557 Z" fill="url(#tent)"/>
  <path d="M626.0,460.2 C623.3,460.8 614.5,462.6 609.6,463.9 C604.7,465.2 599.5,466.8 596.7,467.9 C593.9,469.0 594.1,469.1 592.8,470.8 C591.5,472.5 590.4,475.0 588.8,477.8 C587.1,480.6 585.2,484.2 582.9,487.7 C580.6,491.2 578.4,494.8 575.0,498.6 C571.6,502.4 567.9,505.6 562.7,510.6 C557.5,515.6 549.7,523.5 543.7,528.5 C537.7,533.5 531.7,537.1 526.8,540.9 C521.9,544.6 517.5,548.3 514.5,551.0 C511.5,553.7 509.9,556.0 509.0,557.0  L551.5,557 C552.6,553.8 555.7,543.9 558.3,537.5 C560.9,531.1 564.4,523.4 567.2,518.4 C570.0,513.4 572.5,510.8 575.0,507.5 C577.5,504.2 579.4,501.6 581.9,498.6 C584.4,495.7 587.0,493.0 589.8,489.8 C592.5,486.6 595.4,482.8 598.4,479.7 C601.4,476.6 604.7,473.4 607.7,471.1 C610.7,468.8 613.4,467.4 616.4,466.0 C619.4,464.6 624.4,463.4 626.0,462.9  Z" fill="url(#ridge)"/>
    <path d="M626.0,462.9 C624.4,463.4 619.4,464.6 616.4,466.0 C613.4,467.4 610.7,468.8 607.7,471.1 C604.7,473.4 601.4,476.6 598.4,479.7 C595.4,482.8 592.5,486.6 589.8,489.8 C587.0,493.0 584.4,495.7 581.9,498.6 C579.4,501.6 577.5,504.2 575.0,507.5 C572.5,510.8 570.0,513.4 567.2,518.4 C564.4,523.4 560.9,531.1 558.3,537.5 C555.7,543.9 552.6,553.8 551.5,557.0 " stroke="#1e4a06" stroke-width="1" fill="none"/>
  <path d="M557,542.5 C570,545 590,549 626,553.5" stroke="#2e6a0c" stroke-width="0.8" fill="none"/>
</svg>

<!--stars--><svg style="left:0;top:0" width="624" height="556" viewBox="0 0 624 556"><g filter="url(#blur03)"><circle cx="282.3" cy="5.0" r="0.8" fill="rgb(227,227,232)" opacity="0.26"/><circle cx="316.9" cy="5.3" r="0.8" fill="rgb(250,250,255)" opacity="0.11"/><circle cx="383.1" cy="1.7" r="0.5" fill="rgb(181,181,186)" opacity="0.17"/><circle cx="336.1" cy="8.0" r="0.8" fill="rgb(227,227,232)" opacity="0.20"/><circle cx="408.0" cy="5.5" r="0.5" fill="rgb(237,237,242)" opacity="0.10"/><circle cx="39.4" cy="0.3" r="0.5" fill="rgb(229,229,234)" opacity="0.25"/><circle cx="203.6" cy="5.3" r="0.5" fill="rgb(251,251,251)" opacity="0.12"/><circle cx="183.6" cy="0.0" r="0.6" fill="rgb(222,222,227)" opacity="0.09"/><circle cx="622.5" cy="9.0" r="0.6" fill="rgb(210,210,215)" opacity="0.24"/><circle cx="473.0" cy="4.6" r="0.5" fill="rgb(221,221,226)" opacity="0.08"/><circle cx="67.3" cy="2.6" r="0.5" fill="rgb(170,170,175)" opacity="0.09"/><circle cx="133.2" cy="8.3" r="0.8" fill="rgb(220,220,225)" opacity="0.09"/><circle cx="261.9" cy="5.1" r="0.6" fill="rgb(213,213,218)" opacity="0.12"/><circle cx="54.4" cy="3.0" r="0.5" fill="rgb(187,187,192)" opacity="0.27"/><circle cx="153.7" cy="0.9" r="0.8" fill="rgb(192,192,197)" opacity="0.09"/><circle cx="425.6" cy="1.7" r="0.5" fill="rgb(223,223,228)" opacity="0.17"/><circle cx="401.7" cy="1.0" r="0.5" fill="rgb(170,170,175)" opacity="0.16"/><circle cx="168.4" cy="8.7" r="0.6" fill="rgb(172,172,177)" opacity="0.23"/><circle cx="131.5" cy="3.5" r="0.5" fill="rgb(175,175,180)" opacity="0.24"/><circle cx="617.3" cy="1.9" r="0.6" fill="rgb(207,207,212)" opacity="0.12"/><circle cx="241.0" cy="0.7" r="0.5" fill="rgb(171,171,176)" opacity="0.12"/><circle cx="375.2" cy="3.3" r="0.8" fill="rgb(243,243,248)" opacity="0.17"/><circle cx="84.7" cy="3.5" r="0.6" fill="rgb(199,199,204)" opacity="0.20"/><circle cx="510.3" cy="2.2" r="0.5" fill="rgb(219,219,224)" opacity="0.12"/><circle cx="550.5" cy="5.4" r="0.5" fill="rgb(183,183,188)" opacity="0.16"/><circle cx="24.1" cy="8.7" r="0.8" fill="rgb(202,202,207)" opacity="0.12"/><circle cx="262.6" cy="8.1" r="0.5" fill="rgb(178,178,183)" opacity="0.17"/><circle cx="78.9" cy="4.3" r="0.5" fill="rgb(205,205,210)" opacity="0.20"/><circle cx="132.5" cy="8.2" r="0.5" fill="rgb(204,204,209)" opacity="0.23"/><circle cx="256.7" cy="2.2" r="0.6" fill="rgb(217,217,222)" opacity="0.09"/><circle cx="331.3" cy="8.8" r="0.5" fill="rgb(227,227,232)" opacity="0.10"/><circle cx="611.8" cy="5.9" r="0.5" fill="rgb(245,245,250)" opacity="0.21"/><circle cx="21.9" cy="0.2" r="0.6" fill="rgb(174,174,179)" opacity="0.26"/><circle cx="13.3" cy="5.7" r="0.6" fill="rgb(210,210,215)" opacity="0.17"/><circle cx="85.2" cy="0.7" r="0.6" fill="rgb(175,175,180)" opacity="0.17"/><circle cx="561.7" cy="6.6" r="0.6" fill="rgb(215,215,220)" opacity="0.21"/><circle cx="53.0" cy="4.3" r="0.8" fill="rgb(173,173,178)" opacity="0.09"/><circle cx="538.8" cy="5.2" r="0.8" fill="rgb(218,218,223)" opacity="0.20"/><circle cx="363.6" cy="5.5" r="0.5" fill="rgb(202,202,207)" opacity="0.09"/><circle cx="549.0" cy="6.6" r="0.8" fill="rgb(226,226,231)" opacity="0.15"/><circle cx="288.7" cy="4.9" r="0.5" fill="rgb(209,209,214)" opacity="0.18"/><circle cx="375.2" cy="4.3" r="0.5" fill="rgb(233,233,238)" opacity="0.12"/><circle cx="486.7" cy="5.9" r="0.5" fill="rgb(217,217,222)" opacity="0.17"/><circle cx="187.8" cy="6.1" r="0.5" fill="rgb(213,213,218)" opacity="0.12"/><circle cx="411.8" cy="4.0" r="0.6" fill="rgb(221,221,226)" opacity="0.26"/><circle cx="415.5" cy="1.8" r="0.5" fill="rgb(197,197,202)" opacity="0.16"/><circle cx="239.9" cy="5.2" r="0.5" fill="rgb(187,187,192)" opacity="0.14"/><circle cx="309.8" cy="7.5" r="0.5" fill="rgb(205,205,210)" opacity="0.24"/><circle cx="512.8" cy="1.0" r="0.5" fill="rgb(222,222,227)" opacity="0.17"/><circle cx="238.7" cy="4.7" r="0.8" fill="rgb(211,211,216)" opacity="0.21"/><circle cx="46.6" cy="0.3" r="0.5" fill="rgb(205,205,210)" opacity="0.25"/><circle cx="356.0" cy="2.8" r="0.5" fill="rgb(252,252,252)" opacity="0.23"/><circle cx="84.8" cy="4.1" r="0.6" fill="rgb(200,200,205)" opacity="0.08"/><circle cx="486.3" cy="7.2" r="0.5" fill="rgb(227,227,232)" opacity="0.27"/><circle cx="68.0" cy="4.8" r="0.6" fill="rgb(179,179,184)" opacity="0.20"/><circle cx="427.1" cy="1.8" r="0.5" fill="rgb(171,171,176)" opacity="0.17"/><circle cx="471.2" cy="4.8" r="0.5" fill="rgb(204,204,209)" opacity="0.08"/><circle cx="485.8" cy="4.9" r="0.5" fill="rgb(220,220,225)" opacity="0.27"/><circle cx="529.6" cy="6.3" r="0.8" fill="rgb(219,219,224)" opacity="0.12"/><circle cx="81.1" cy="4.1" r="0.5" fill="rgb(218,218,223)" opacity="0.20"/><circle cx="343.2" cy="5.9" r="0.6" fill="rgb(229,229,234)" opacity="0.17"/><circle cx="203.7" cy="8.8" r="0.5" fill="rgb(197,197,202)" opacity="0.10"/><circle cx="151.2" cy="3.5" r="0.6" fill="rgb(238,238,243)" opacity="0.10"/><circle cx="609.5" cy="8.4" r="0.5" fill="rgb(214,214,219)" opacity="0.12"/><circle cx="314.9" cy="0.3" r="0.8" fill="rgb(205,205,210)" opacity="0.14"/><circle cx="304.2" cy="0.3" r="0.5" fill="rgb(224,224,229)" opacity="0.23"/><circle cx="499.1" cy="1.6" r="0.5" fill="rgb(230,230,235)" opacity="0.14"/><circle cx="92.8" cy="4.6" r="0.8" fill="rgb(233,233,238)" opacity="0.22"/><circle cx="361.3" cy="6.2" r="0.8" fill="rgb(237,237,242)" opacity="0.23"/><circle cx="348.7" cy="7.5" r="0.5" fill="rgb(236,236,241)" opacity="0.18"/><circle cx="320.9" cy="8.2" r="0.8" fill="rgb(248,248,253)" opacity="0.12"/><circle cx="129.9" cy="7.7" r="0.6" fill="rgb(243,243,248)" opacity="0.27"/><circle cx="310.5" cy="3.7" r="0.5" fill="rgb(247,247,252)" opacity="0.10"/><circle cx="235.3" cy="4.8" r="0.8" fill="rgb(239,239,244)" opacity="0.09"/><circle cx="499.9" cy="5.1" r="0.5" fill="rgb(178,178,183)" opacity="0.17"/><circle cx="580.8" cy="4.1" r="0.8" fill="rgb(204,204,209)" opacity="0.26"/><circle cx="153.7" cy="4.4" r="0.8" fill="rgb(237,237,242)" opacity="0.14"/><circle cx="197.9" cy="1.7" r="0.6" fill="rgb(186,186,191)" opacity="0.20"/><circle cx="438.1" cy="8.8" r="0.5" fill="rgb(199,199,204)" opacity="0.08"/><circle cx="7.4" cy="2.6" r="0.5" fill="rgb(249,249,254)" opacity="0.22"/><circle cx="311.3" cy="4.5" r="0.6" fill="rgb(195,195,200)" opacity="0.19"/><circle cx="437.7" cy="7.9" r="0.8" fill="rgb(237,237,242)" opacity="0.08"/><circle cx="384.3" cy="4.8" r="0.5" fill="rgb(237,237,242)" opacity="0.25"/><circle cx="134.9" cy="4.9" r="0.5" fill="rgb(199,199,204)" opacity="0.19"/><circle cx="570.8" cy="5.7" r="0.5" fill="rgb(210,210,215)" opacity="0.14"/><circle cx="376.4" cy="8.0" r="0.5" fill="rgb(182,182,187)" opacity="0.12"/><circle cx="83.6" cy="2.2" r="0.6" fill="rgb(219,219,224)" opacity="0.22"/><circle cx="60.5" cy="7.5" r="0.5" fill="rgb(195,195,200)" opacity="0.16"/><circle cx="251.3" cy="6.2" r="0.5" fill="rgb(242,242,247)" opacity="0.08"/><circle cx="425.8" cy="8.2" r="0.5" fill="rgb(234,234,239)" opacity="0.27"/><circle cx="396.0" cy="3.1" r="0.5" fill="rgb(179,179,184)" opacity="0.28"/><circle cx="300.8" cy="0.2" r="0.8" fill="rgb(188,188,193)" opacity="0.23"/><circle cx="118.3" cy="1.0" r="0.5" fill="rgb(206,206,211)" opacity="0.11"/><circle cx="578.4" cy="0.9" r="0.8" fill="rgb(179,179,184)" opacity="0.09"/><circle cx="477.2" cy="2.9" r="0.6" fill="rgb(225,225,230)" opacity="0.17"/><circle cx="131.1" cy="3.4" r="0.5" fill="rgb(195,195,200)" opacity="0.20"/><circle cx="113.1" cy="4.1" r="0.8" fill="rgb(194,194,199)" opacity="0.23"/><circle cx="377.4" cy="0.9" r="0.6" fill="rgb(180,180,185)" opacity="0.23"/><circle cx="500.3" cy="6.3" r="0.8" fill="rgb(242,242,247)" opacity="0.24"/><circle cx="374.2" cy="4.5" r="0.6" fill="rgb(205,205,210)" opacity="0.27"/><circle cx="568.7" cy="6.7" r="0.8" fill="rgb(187,187,192)" opacity="0.23"/><circle cx="559.4" cy="7.9" r="0.8" fill="rgb(193,193,198)" opacity="0.21"/><circle cx="253.2" cy="6.5" r="0.6" fill="rgb(208,208,213)" opacity="0.09"/><circle cx="292.6" cy="0.1" r="0.5" fill="rgb(199,199,204)" opacity="0.14"/><circle cx="170.3" cy="8.7" r="0.5" fill="rgb(254,254,254)" opacity="0.14"/><circle cx="253.4" cy="1.6" r="0.8" fill="rgb(252,252,252)" opacity="0.09"/><circle cx="133.0" cy="1.1" r="0.5" fill="rgb(184,184,189)" opacity="0.15"/><circle cx="384.0" cy="6.6" r="0.8" fill="rgb(234,234,239)" opacity="0.12"/><circle cx="31.5" cy="1.8" r="0.5" fill="rgb(203,203,208)" opacity="0.15"/><circle cx="156.6" cy="8.2" r="0.8" fill="rgb(236,236,241)" opacity="0.18"/><circle cx="354.4" cy="9.0" r="0.5" fill="rgb(240,240,245)" opacity="0.20"/><circle cx="372.9" cy="6.8" r="0.5" fill="rgb(219,219,224)" opacity="0.09"/><circle cx="294.4" cy="1.5" r="0.5" fill="rgb(224,224,229)" opacity="0.17"/><circle cx="589.9" cy="3.8" r="0.6" fill="rgb(216,216,221)" opacity="0.18"/><circle cx="331.0" cy="4.3" r="0.6" fill="rgb(254,254,254)" opacity="0.13"/><circle cx="447.2" cy="2.7" r="0.5" fill="rgb(244,244,249)" opacity="0.08"/><circle cx="26.7" cy="1.4" r="0.8" fill="rgb(176,176,181)" opacity="0.23"/><circle cx="560.1" cy="6.7" r="0.6" fill="rgb(179,179,184)" opacity="0.09"/><circle cx="497.7" cy="2.0" r="0.6" fill="rgb(201,201,206)" opacity="0.22"/><circle cx="28.4" cy="0.9" r="0.8" fill="rgb(188,188,193)" opacity="0.23"/><circle cx="610.8" cy="7.4" r="0.5" fill="rgb(176,176,181)" opacity="0.20"/><circle cx="389.5" cy="4.1" r="0.5" fill="rgb(215,215,220)" opacity="0.12"/><circle cx="329.5" cy="1.1" r="0.8" fill="rgb(228,228,233)" opacity="0.17"/><circle cx="375.1" cy="5.8" r="0.6" fill="rgb(237,237,242)" opacity="0.21"/><circle cx="508.6" cy="1.2" r="0.5" fill="rgb(200,200,205)" opacity="0.14"/><circle cx="300.2" cy="4.5" r="0.6" fill="rgb(205,205,210)" opacity="0.14"/><circle cx="169.4" cy="6.2" r="0.5" fill="rgb(251,251,251)" opacity="0.19"/><circle cx="173.9" cy="2.2" r="0.5" fill="rgb(175,175,180)" opacity="0.27"/><circle cx="392.1" cy="0.1" r="0.5" fill="rgb(249,249,254)" opacity="0.12"/><circle cx="23.7" cy="2.0" r="0.5" fill="rgb(190,190,195)" opacity="0.13"/><circle cx="343.6" cy="5.7" r="0.8" fill="rgb(215,215,220)" opacity="0.15"/><circle cx="131.4" cy="3.1" r="0.5" fill="rgb(185,185,190)" opacity="0.23"/><circle cx="279.1" cy="7.4" r="0.5" fill="rgb(226,226,231)" opacity="0.24"/><circle cx="264.8" cy="2.3" r="0.6" fill="rgb(189,189,194)" opacity="0.23"/><circle cx="407.9" cy="8.9" r="0.5" fill="rgb(224,224,229)" opacity="0.14"/><circle cx="408.0" cy="5.2" r="0.6" fill="rgb(180,180,185)" opacity="0.17"/><circle cx="339.2" cy="3.9" r="0.8" fill="rgb(208,208,213)" opacity="0.19"/><circle cx="513.9" cy="0.1" r="0.5" fill="rgb(208,208,213)" opacity="0.14"/><circle cx="308.7" cy="6.9" r="0.5" fill="rgb(198,198,203)" opacity="0.14"/><circle cx="223.3" cy="6.5" r="0.5" fill="rgb(211,211,216)" opacity="0.15"/><circle cx="442.6" cy="5.1" r="0.6" fill="rgb(226,226,231)" opacity="0.26"/><circle cx="330.9" cy="8.9" r="0.5" fill="rgb(221,221,226)" opacity="0.17"/><circle cx="603.9" cy="6.6" r="0.5" fill="rgb(216,216,221)" opacity="0.18"/><circle cx="517.0" cy="0.2" r="0.8" fill="rgb(194,194,199)" opacity="0.21"/><circle cx="461.0" cy="3.3" r="0.5" fill="rgb(245,245,250)" opacity="0.15"/><circle cx="351.2" cy="1.6" r="0.6" fill="rgb(172,172,177)" opacity="0.23"/><circle cx="138.1" cy="0.5" r="0.6" fill="rgb(172,172,177)" opacity="0.10"/><circle cx="406.4" cy="7.2" r="0.6" fill="rgb(239,239,244)" opacity="0.09"/><circle cx="52.4" cy="0.7" r="0.6" fill="rgb(180,180,185)" opacity="0.22"/><circle cx="16.2" cy="5.9" r="0.8" fill="rgb(201,201,206)" opacity="0.10"/><circle cx="444.4" cy="4.4" r="0.6" fill="rgb(228,228,233)" opacity="0.26"/><circle cx="246.1" cy="3.0" r="0.5" fill="rgb(233,233,238)" opacity="0.27"/><circle cx="304.5" cy="7.2" r="0.5" fill="rgb(222,222,227)" opacity="0.09"/><circle cx="472.4" cy="8.9" r="0.5" fill="rgb(218,218,223)" opacity="0.14"/><circle cx="520.3" cy="8.0" r="0.5" fill="rgb(237,237,242)" opacity="0.27"/><circle cx="225.9" cy="0.1" r="0.8" fill="rgb(188,188,193)" opacity="0.10"/><circle cx="153.3" cy="1.5" r="0.5" fill="rgb(211,211,216)" opacity="0.20"/><circle cx="127.5" cy="3.8" r="0.5" fill="rgb(230,230,235)" opacity="0.14"/><circle cx="192.5" cy="1.0" r="0.5" fill="rgb(177,177,182)" opacity="0.20"/><circle cx="470.0" cy="0.2" r="0.5" fill="rgb(210,210,215)" opacity="0.17"/><circle cx="2.6" cy="19.5" r="0.5" fill="rgb(246,246,251)" opacity="0.12"/><circle cx="17.2" cy="42.9" r="0.5" fill="rgb(205,205,210)" opacity="0.12"/><circle cx="9.7" cy="60.9" r="0.8" fill="rgb(203,203,208)" opacity="0.26"/><circle cx="11.6" cy="31.9" r="0.5" fill="rgb(231,231,236)" opacity="0.27"/><circle cx="20.7" cy="31.8" r="0.5" fill="rgb(219,219,224)" opacity="0.12"/><circle cx="23.4" cy="54.3" r="0.5" fill="rgb(254,254,254)" opacity="0.23"/><circle cx="22.2" cy="59.9" r="0.6" fill="rgb(227,227,232)" opacity="0.25"/><circle cx="19.1" cy="49.7" r="0.5" fill="rgb(223,223,228)" opacity="0.20"/><circle cx="3.8" cy="27.3" r="0.5" fill="rgb(251,251,251)" opacity="0.12"/><circle cx="17.8" cy="44.3" r="0.5" fill="rgb(189,189,194)" opacity="0.18"/><circle cx="13.7" cy="19.2" r="0.5" fill="rgb(186,186,191)" opacity="0.12"/><circle cx="2.0" cy="24.4" r="0.5" fill="rgb(231,231,236)" opacity="0.22"/><circle cx="16.6" cy="13.7" r="0.6" fill="rgb(172,172,177)" opacity="0.23"/><circle cx="18.9" cy="32.8" r="0.5" fill="rgb(226,226,231)" opacity="0.26"/><circle cx="5.0" cy="40.0" r="0.5" fill="rgb(209,209,214)" opacity="0.18"/><circle cx="7.6" cy="32.1" r="0.8" fill="rgb(255,255,255)" opacity="0.18"/><circle cx="17.2" cy="29.5" r="0.5" fill="rgb(255,255,255)" opacity="0.21"/><circle cx="9.5" cy="35.3" r="0.5" fill="rgb(253,253,253)" opacity="0.27"/><circle cx="10.7" cy="58.2" r="0.8" fill="rgb(200,200,205)" opacity="0.21"/><circle cx="7.0" cy="15.5" r="0.5" fill="rgb(248,248,253)" opacity="0.23"/><circle cx="3.7" cy="44.8" r="0.6" fill="rgb(213,213,218)" opacity="0.26"/><circle cx="18.1" cy="40.7" r="0.5" fill="rgb(195,195,200)" opacity="0.09"/><circle cx="9.0" cy="15.2" r="0.6" fill="rgb(242,242,247)" opacity="0.14"/><circle cx="11.3" cy="45.5" r="0.8" fill="rgb(181,181,186)" opacity="0.17"/><circle cx="2.4" cy="44.4" r="0.5" fill="rgb(193,193,198)" opacity="0.10"/><circle cx="4.6" cy="11.1" r="0.5" fill="rgb(182,182,187)" opacity="0.17"/><circle cx="5.4" cy="18.0" r="0.8" fill="rgb(179,179,184)" opacity="0.10"/><circle cx="8.2" cy="55.9" r="0.5" fill="rgb(252,252,252)" opacity="0.26"/><circle cx="4.9" cy="17.4" r="0.8" fill="rgb(212,212,217)" opacity="0.21"/><circle cx="22.1" cy="44.5" r="0.6" fill="rgb(201,201,206)" opacity="0.22"/><circle cx="15.8" cy="43.7" r="0.6" fill="rgb(194,194,199)" opacity="0.08"/><circle cx="8.2" cy="46.1" r="0.8" fill="rgb(196,196,201)" opacity="0.10"/><circle cx="12.2" cy="53.9" r="0.5" fill="rgb(202,202,207)" opacity="0.24"/><circle cx="18.4" cy="60.5" r="0.6" fill="rgb(248,248,253)" opacity="0.18"/><circle cx="12.0" cy="17.1" r="0.5" fill="rgb(242,242,247)" opacity="0.22"/><circle cx="22.7" cy="44.7" r="0.5" fill="rgb(187,187,192)" opacity="0.12"/><circle cx="5.9" cy="41.9" r="0.6" fill="rgb(181,181,186)" opacity="0.21"/><circle cx="22.3" cy="29.6" r="0.5" fill="rgb(227,227,232)" opacity="0.17"/><circle cx="23.4" cy="16.7" r="0.5" fill="rgb(241,241,246)" opacity="0.26"/><circle cx="22.0" cy="18.6" r="0.6" fill="rgb(246,246,251)" opacity="0.23"/><circle cx="3.5" cy="62.2" r="0.6" fill="rgb(200,200,205)" opacity="0.07"/><circle cx="18.2" cy="29.7" r="0.5" fill="rgb(228,228,233)" opacity="0.11"/><circle cx="0.8" cy="19.3" r="0.5" fill="rgb(209,209,214)" opacity="0.27"/><circle cx="18.1" cy="57.3" r="0.5" fill="rgb(190,190,195)" opacity="0.26"/><circle cx="4.8" cy="35.7" r="0.8" fill="rgb(185,185,190)" opacity="0.10"/><circle cx="13.7" cy="18.9" r="0.6" fill="rgb(201,201,206)" opacity="0.18"/><circle cx="13.6" cy="27.9" r="0.5" fill="rgb(255,255,255)" opacity="0.20"/><circle cx="18.9" cy="32.0" r="0.5" fill="rgb(230,230,235)" opacity="0.17"/><circle cx="8.3" cy="60.1" r="0.8" fill="rgb(206,206,211)" opacity="0.26"/><circle cx="11.7" cy="65.7" r="0.8" fill="rgb(225,225,230)" opacity="0.24"/><circle cx="2.8" cy="15.5" r="0.6" fill="rgb(237,237,242)" opacity="0.27"/><circle cx="12.5" cy="33.0" r="0.5" fill="rgb(207,207,212)" opacity="0.08"/><circle cx="17.4" cy="60.3" r="0.6" fill="rgb(209,209,214)" opacity="0.22"/><circle cx="21.2" cy="59.0" r="0.8" fill="rgb(201,201,206)" opacity="0.12"/><circle cx="12.1" cy="31.6" r="0.5" fill="rgb(237,237,242)" opacity="0.09"/><circle cx="21.8" cy="40.1" r="0.5" fill="rgb(178,178,183)" opacity="0.20"/><circle cx="24.0" cy="50.7" r="0.6" fill="rgb(239,239,244)" opacity="0.25"/><circle cx="10.1" cy="54.9" r="0.8" fill="rgb(242,242,247)" opacity="0.12"/><circle cx="2.9" cy="13.1" r="0.5" fill="rgb(185,185,190)" opacity="0.18"/><circle cx="21.2" cy="41.8" r="0.6" fill="rgb(201,201,206)" opacity="0.17"/><circle cx="6.6" cy="74.0" r="0.8" fill="rgb(227,227,232)" opacity="0.10"/><circle cx="7.3" cy="198.7" r="0.5" fill="rgb(175,175,180)" opacity="0.12"/><circle cx="2.8" cy="217.9" r="0.6" fill="rgb(233,233,238)" opacity="0.12"/><circle cx="1.3" cy="325.4" r="0.5" fill="rgb(195,195,200)" opacity="0.17"/><circle cx="2.7" cy="374.2" r="0.5" fill="rgb(210,210,215)" opacity="0.18"/><circle cx="7.5" cy="184.3" r="0.5" fill="rgb(251,251,251)" opacity="0.14"/><circle cx="7.9" cy="398.5" r="0.5" fill="rgb(194,194,199)" opacity="0.10"/><circle cx="8.5" cy="392.1" r="0.6" fill="rgb(210,210,215)" opacity="0.15"/><circle cx="8.7" cy="157.5" r="0.5" fill="rgb(212,212,217)" opacity="0.13"/><circle cx="6.3" cy="379.2" r="0.5" fill="rgb(191,191,196)" opacity="0.13"/><circle cx="2.0" cy="168.6" r="0.5" fill="rgb(204,204,209)" opacity="0.17"/><circle cx="1.6" cy="144.6" r="0.6" fill="rgb(217,217,222)" opacity="0.16"/><circle cx="7.2" cy="241.2" r="0.5" fill="rgb(208,208,213)" opacity="0.09"/><circle cx="8.1" cy="126.3" r="0.5" fill="rgb(251,251,251)" opacity="0.10"/><circle cx="6.0" cy="220.5" r="0.5" fill="rgb(237,237,242)" opacity="0.09"/><circle cx="8.2" cy="68.3" r="0.6" fill="rgb(224,224,229)" opacity="0.15"/><circle cx="7.2" cy="95.1" r="0.5" fill="rgb(201,201,206)" opacity="0.11"/><circle cx="1.6" cy="311.2" r="0.5" fill="rgb(174,174,179)" opacity="0.08"/><circle cx="5.6" cy="372.1" r="0.5" fill="rgb(233,233,238)" opacity="0.15"/><circle cx="0.5" cy="87.4" r="0.6" fill="rgb(211,211,216)" opacity="0.17"/><circle cx="5.9" cy="327.5" r="0.5" fill="rgb(246,246,251)" opacity="0.14"/><circle cx="7.0" cy="121.2" r="0.5" fill="rgb(255,255,255)" opacity="0.15"/><circle cx="4.0" cy="324.2" r="0.5" fill="rgb(203,203,208)" opacity="0.17"/><circle cx="4.4" cy="139.9" r="0.8" fill="rgb(203,203,208)" opacity="0.15"/><circle cx="0.3" cy="265.3" r="0.8" fill="rgb(193,193,198)" opacity="0.17"/><circle cx="2.9" cy="269.2" r="0.8" fill="rgb(234,234,239)" opacity="0.15"/><circle cx="4.0" cy="153.8" r="0.5" fill="rgb(184,184,189)" opacity="0.17"/><circle cx="8.2" cy="256.0" r="0.5" fill="rgb(249,249,254)" opacity="0.14"/><circle cx="1.3" cy="169.9" r="0.6" fill="rgb(249,249,254)" opacity="0.08"/><circle cx="6.6" cy="326.8" r="0.8" fill="rgb(181,181,186)" opacity="0.17"/><circle cx="5.9" cy="236.5" r="0.5" fill="rgb(190,190,195)" opacity="0.12"/><circle cx="4.5" cy="286.1" r="0.8" fill="rgb(177,177,182)" opacity="0.15"/><circle cx="2.8" cy="221.9" r="0.5" fill="rgb(186,186,191)" opacity="0.16"/><circle cx="4.4" cy="320.3" r="0.5" fill="rgb(228,228,233)" opacity="0.20"/><circle cx="4.7" cy="395.2" r="0.8" fill="rgb(237,237,242)" opacity="0.07"/><circle cx="1.3" cy="197.2" r="0.8" fill="rgb(179,179,184)" opacity="0.11"/><circle cx="8.7" cy="293.1" r="0.5" fill="rgb(207,207,212)" opacity="0.17"/><circle cx="2.3" cy="250.3" r="0.8" fill="rgb(181,181,186)" opacity="0.10"/><circle cx="8.4" cy="187.6" r="0.5" fill="rgb(175,175,180)" opacity="0.12"/><circle cx="1.4" cy="261.5" r="0.6" fill="rgb(242,242,247)" opacity="0.20"/><circle cx="6.3" cy="354.7" r="0.5" fill="rgb(229,229,234)" opacity="0.15"/><circle cx="7.7" cy="378.4" r="0.8" fill="rgb(176,176,181)" opacity="0.10"/><circle cx="1.9" cy="182.0" r="0.5" fill="rgb(231,231,236)" opacity="0.10"/><circle cx="1.8" cy="137.6" r="0.6" fill="rgb(230,230,235)" opacity="0.14"/><circle cx="4.0" cy="397.8" r="0.8" fill="rgb(196,196,201)" opacity="0.16"/><circle cx="4.9" cy="206.0" r="0.6" fill="rgb(216,216,221)" opacity="0.08"/><circle cx="8.5" cy="273.4" r="0.6" fill="rgb(235,235,240)" opacity="0.14"/><circle cx="3.5" cy="374.5" r="0.6" fill="rgb(183,183,188)" opacity="0.17"/><circle cx="3.2" cy="117.3" r="0.6" fill="rgb(187,187,192)" opacity="0.19"/><circle cx="6.9" cy="307.6" r="0.5" fill="rgb(211,211,216)" opacity="0.19"/><circle cx="7.5" cy="216.3" r="0.8" fill="rgb(211,211,216)" opacity="0.18"/><circle cx="2.3" cy="359.5" r="0.6" fill="rgb(220,220,225)" opacity="0.16"/><circle cx="5.5" cy="229.1" r="0.5" fill="rgb(174,174,179)" opacity="0.10"/><circle cx="1.9" cy="203.2" r="0.5" fill="rgb(236,236,241)" opacity="0.14"/><circle cx="6.4" cy="153.0" r="0.8" fill="rgb(188,188,193)" opacity="0.17"/><circle cx="7.9" cy="344.8" r="0.8" fill="rgb(221,221,226)" opacity="0.14"/><circle cx="1.2" cy="238.6" r="0.5" fill="rgb(207,207,212)" opacity="0.12"/><circle cx="3.3" cy="270.2" r="0.5" fill="rgb(250,250,255)" opacity="0.10"/><circle cx="4.3" cy="69.8" r="0.6" fill="rgb(254,254,254)" opacity="0.17"/><circle cx="6.0" cy="373.0" r="0.6" fill="rgb(255,255,255)" opacity="0.10"/><circle cx="1.1" cy="324.8" r="0.6" fill="rgb(181,181,186)" opacity="0.12"/><circle cx="7.2" cy="106.0" r="0.8" fill="rgb(219,219,224)" opacity="0.14"/><circle cx="8.4" cy="161.0" r="0.5" fill="rgb(190,190,195)" opacity="0.17"/><circle cx="8.3" cy="133.4" r="0.6" fill="rgb(255,255,255)" opacity="0.17"/><circle cx="6.4" cy="239.8" r="0.8" fill="rgb(189,189,194)" opacity="0.17"/><circle cx="4.3" cy="151.8" r="0.6" fill="rgb(172,172,177)" opacity="0.18"/><circle cx="8.1" cy="106.2" r="0.8" fill="rgb(204,204,209)" opacity="0.19"/><circle cx="0.5" cy="231.5" r="0.8" fill="rgb(211,211,216)" opacity="0.15"/><circle cx="8.0" cy="90.1" r="0.6" fill="rgb(217,217,222)" opacity="0.08"/><circle cx="5.1" cy="153.5" r="0.5" fill="rgb(252,252,252)" opacity="0.16"/><circle cx="4.2" cy="271.5" r="0.6" fill="rgb(173,173,178)" opacity="0.20"/><circle cx="5.2" cy="380.8" r="0.5" fill="rgb(249,249,254)" opacity="0.17"/><circle cx="4.9" cy="270.7" r="0.5" fill="rgb(229,229,234)" opacity="0.09"/><circle cx="7.9" cy="193.5" r="0.5" fill="rgb(187,187,192)" opacity="0.19"/><circle cx="6.2" cy="157.1" r="0.8" fill="rgb(172,172,177)" opacity="0.14"/><circle cx="1.3" cy="130.3" r="0.5" fill="rgb(200,200,205)" opacity="0.10"/><circle cx="4.7" cy="375.4" r="0.5" fill="rgb(200,200,205)" opacity="0.20"/><circle cx="4.9" cy="349.6" r="0.5" fill="rgb(249,249,254)" opacity="0.17"/><circle cx="7.4" cy="361.3" r="0.6" fill="rgb(203,203,208)" opacity="0.16"/><circle cx="3.1" cy="362.0" r="0.5" fill="rgb(220,220,225)" opacity="0.12"/><circle cx="6.2" cy="387.9" r="0.5" fill="rgb(212,212,217)" opacity="0.18"/><circle cx="5.6" cy="229.9" r="0.6" fill="rgb(223,223,228)" opacity="0.14"/><circle cx="2.6" cy="316.2" r="0.5" fill="rgb(252,252,252)" opacity="0.14"/><circle cx="2.2" cy="174.5" r="0.5" fill="rgb(178,178,183)" opacity="0.10"/><circle cx="8.9" cy="339.2" r="0.6" fill="rgb(184,184,189)" opacity="0.18"/><circle cx="7.6" cy="237.1" r="0.5" fill="rgb(190,190,195)" opacity="0.16"/><circle cx="5.6" cy="203.8" r="0.6" fill="rgb(202,202,207)" opacity="0.14"/><circle cx="3.6" cy="313.0" r="0.6" fill="rgb(251,251,251)" opacity="0.16"/><circle cx="2.3" cy="305.1" r="0.6" fill="rgb(196,196,201)" opacity="0.12"/><circle cx="7.6" cy="342.7" r="0.8" fill="rgb(252,252,252)" opacity="0.14"/><circle cx="619.6" cy="246.4" r="0.5" fill="rgb(186,186,191)" opacity="0.20"/><circle cx="612.0" cy="245.7" r="0.5" fill="rgb(171,171,176)" opacity="0.12"/><circle cx="616.1" cy="273.3" r="0.5" fill="rgb(204,204,209)" opacity="0.20"/><circle cx="619.3" cy="168.8" r="0.8" fill="rgb(219,219,224)" opacity="0.17"/><circle cx="623.0" cy="385.7" r="0.5" fill="rgb(175,175,180)" opacity="0.08"/><circle cx="611.9" cy="144.8" r="0.5" fill="rgb(221,221,226)" opacity="0.15"/><circle cx="614.0" cy="19.1" r="0.8" fill="rgb(191,191,196)" opacity="0.15"/><circle cx="614.6" cy="126.8" r="0.6" fill="rgb(198,198,203)" opacity="0.20"/><circle cx="614.9" cy="244.4" r="0.8" fill="rgb(197,197,202)" opacity="0.19"/><circle cx="617.2" cy="313.9" r="0.5" fill="rgb(183,183,188)" opacity="0.10"/><circle cx="617.3" cy="350.6" r="0.8" fill="rgb(185,185,190)" opacity="0.20"/><circle cx="611.3" cy="346.0" r="0.5" fill="rgb(205,205,210)" opacity="0.12"/><circle cx="618.4" cy="113.4" r="0.8" fill="rgb(195,195,200)" opacity="0.11"/><circle cx="614.5" cy="107.9" r="0.5" fill="rgb(170,170,175)" opacity="0.09"/><circle cx="622.4" cy="126.9" r="0.5" fill="rgb(213,213,218)" opacity="0.09"/><circle cx="616.3" cy="388.9" r="0.8" fill="rgb(231,231,236)" opacity="0.10"/><circle cx="609.5" cy="142.9" r="0.5" fill="rgb(197,197,202)" opacity="0.16"/><circle cx="617.3" cy="259.3" r="0.6" fill="rgb(194,194,199)" opacity="0.17"/><circle cx="623.1" cy="338.4" r="0.8" fill="rgb(243,243,248)" opacity="0.23"/><circle cx="621.5" cy="285.2" r="0.5" fill="rgb(191,191,196)" opacity="0.10"/><circle cx="617.1" cy="266.1" r="0.5" fill="rgb(241,241,246)" opacity="0.12"/><circle cx="613.7" cy="204.9" r="0.5" fill="rgb(178,178,183)" opacity="0.07"/><circle cx="623.4" cy="13.2" r="0.5" fill="rgb(233,233,238)" opacity="0.15"/><circle cx="615.0" cy="315.0" r="0.5" fill="rgb(231,231,236)" opacity="0.20"/><circle cx="615.0" cy="277.7" r="0.5" fill="rgb(171,171,176)" opacity="0.12"/><circle cx="617.7" cy="95.6" r="0.6" fill="rgb(234,234,239)" opacity="0.14"/><circle cx="618.9" cy="317.9" r="0.8" fill="rgb(215,215,220)" opacity="0.13"/><circle cx="613.7" cy="34.4" r="0.5" fill="rgb(203,203,208)" opacity="0.17"/><circle cx="614.0" cy="291.6" r="0.5" fill="rgb(239,239,244)" opacity="0.10"/><circle cx="613.6" cy="87.5" r="0.5" fill="rgb(188,188,193)" opacity="0.12"/><circle cx="614.6" cy="78.5" r="0.8" fill="rgb(234,234,239)" opacity="0.08"/><circle cx="609.8" cy="45.1" r="0.5" fill="rgb(172,172,177)" opacity="0.22"/><circle cx="622.2" cy="131.3" r="0.5" fill="rgb(244,244,249)" opacity="0.19"/><circle cx="623.8" cy="172.9" r="0.5" fill="rgb(233,233,238)" opacity="0.22"/><circle cx="615.1" cy="278.0" r="0.6" fill="rgb(178,178,183)" opacity="0.10"/><circle cx="619.2" cy="370.1" r="0.5" fill="rgb(215,215,220)" opacity="0.12"/><circle cx="616.9" cy="12.8" r="0.8" fill="rgb(252,252,252)" opacity="0.18"/><circle cx="609.8" cy="243.9" r="0.8" fill="rgb(250,250,255)" opacity="0.12"/><circle cx="615.4" cy="378.3" r="0.5" fill="rgb(228,228,233)" opacity="0.21"/><circle cx="615.5" cy="187.0" r="0.5" fill="rgb(218,218,223)" opacity="0.20"/><circle cx="618.0" cy="227.2" r="0.5" fill="rgb(237,237,242)" opacity="0.15"/><circle cx="618.4" cy="179.2" r="0.5" fill="rgb(211,211,216)" opacity="0.17"/><circle cx="611.3" cy="187.6" r="0.6" fill="rgb(194,194,199)" opacity="0.23"/><circle cx="620.1" cy="386.0" r="0.5" fill="rgb(232,232,237)" opacity="0.14"/><circle cx="610.7" cy="80.2" r="0.5" fill="rgb(184,184,189)" opacity="0.21"/><circle cx="621.0" cy="203.9" r="0.5" fill="rgb(193,193,198)" opacity="0.23"/><circle cx="622.1" cy="280.1" r="0.6" fill="rgb(228,228,233)" opacity="0.12"/><circle cx="612.1" cy="14.5" r="0.8" fill="rgb(205,205,210)" opacity="0.14"/><circle cx="623.4" cy="99.9" r="0.8" fill="rgb(232,232,237)" opacity="0.09"/><circle cx="622.2" cy="36.5" r="0.5" fill="rgb(240,240,245)" opacity="0.15"/><circle cx="623.6" cy="34.0" r="0.6" fill="rgb(192,192,197)" opacity="0.21"/><circle cx="610.5" cy="23.0" r="0.5" fill="rgb(206,206,211)" opacity="0.12"/><circle cx="610.8" cy="78.2" r="0.8" fill="rgb(232,232,237)" opacity="0.14"/><circle cx="610.1" cy="385.4" r="0.6" fill="rgb(195,195,200)" opacity="0.10"/><circle cx="617.4" cy="387.9" r="0.6" fill="rgb(210,210,215)" opacity="0.13"/><circle cx="621.7" cy="369.4" r="0.5" fill="rgb(196,196,201)" opacity="0.17"/><circle cx="611.7" cy="57.8" r="0.8" fill="rgb(175,175,180)" opacity="0.18"/><circle cx="610.9" cy="53.2" r="0.6" fill="rgb(209,209,214)" opacity="0.21"/><circle cx="611.9" cy="388.0" r="0.6" fill="rgb(209,209,214)" opacity="0.18"/><circle cx="620.5" cy="85.3" r="0.6" fill="rgb(224,224,229)" opacity="0.09"/><circle cx="614.6" cy="242.5" r="0.5" fill="rgb(234,234,239)" opacity="0.12"/><circle cx="610.9" cy="45.2" r="0.8" fill="rgb(200,200,205)" opacity="0.15"/><circle cx="616.4" cy="53.8" r="0.6" fill="rgb(180,180,185)" opacity="0.10"/><circle cx="619.2" cy="182.3" r="0.8" fill="rgb(195,195,200)" opacity="0.21"/><circle cx="620.1" cy="238.1" r="0.5" fill="rgb(216,216,221)" opacity="0.14"/><circle cx="615.3" cy="116.2" r="0.6" fill="rgb(207,207,212)" opacity="0.14"/><circle cx="618.9" cy="13.8" r="0.5" fill="rgb(222,222,227)" opacity="0.17"/><circle cx="614.6" cy="235.0" r="0.8" fill="rgb(223,223,228)" opacity="0.20"/><circle cx="613.2" cy="47.9" r="0.5" fill="rgb(239,239,244)" opacity="0.20"/><circle cx="618.9" cy="181.6" r="0.6" fill="rgb(172,172,177)" opacity="0.10"/><circle cx="614.6" cy="284.5" r="0.6" fill="rgb(172,172,177)" opacity="0.17"/><circle cx="619.0" cy="68.3" r="0.5" fill="rgb(229,229,234)" opacity="0.09"/><circle cx="616.6" cy="191.7" r="0.5" fill="rgb(198,198,203)" opacity="0.17"/><circle cx="623.6" cy="387.2" r="0.5" fill="rgb(253,253,253)" opacity="0.14"/><circle cx="617.1" cy="50.9" r="0.8" fill="rgb(253,253,253)" opacity="0.09"/><circle cx="615.0" cy="259.0" r="0.5" fill="rgb(233,233,238)" opacity="0.11"/><circle cx="614.5" cy="63.5" r="0.5" fill="rgb(170,170,175)" opacity="0.14"/><circle cx="611.5" cy="256.2" r="0.6" fill="rgb(254,254,254)" opacity="0.17"/><circle cx="621.2" cy="287.5" r="0.5" fill="rgb(225,225,230)" opacity="0.19"/><circle cx="616.0" cy="15.0" r="0.5" fill="rgb(183,183,188)" opacity="0.20"/><circle cx="614.3" cy="213.2" r="0.5" fill="rgb(182,182,187)" opacity="0.15"/><circle cx="613.5" cy="202.3" r="0.5" fill="rgb(186,186,191)" opacity="0.10"/><circle cx="618.9" cy="203.2" r="0.6" fill="rgb(201,201,206)" opacity="0.12"/><circle cx="612.7" cy="166.7" r="0.5" fill="rgb(245,245,250)" opacity="0.09"/><circle cx="615.8" cy="221.6" r="0.5" fill="rgb(234,234,239)" opacity="0.14"/><circle cx="611.3" cy="378.7" r="0.8" fill="rgb(249,249,254)" opacity="0.15"/><circle cx="618.2" cy="338.1" r="0.8" fill="rgb(171,171,176)" opacity="0.22"/><circle cx="612.4" cy="312.7" r="0.8" fill="rgb(190,190,195)" opacity="0.09"/><circle cx="613.4" cy="244.7" r="0.8" fill="rgb(208,208,213)" opacity="0.14"/><circle cx="622.7" cy="216.0" r="0.5" fill="rgb(219,219,224)" opacity="0.19"/></g></svg>
<!-- ============ main window ============ -->
<div class="a" style="left:24px;top:9px;width:585px;height:440px;background:#fff">
  <div class="a" style="left:0;top:0;width:585px;height:22px;background:#00cc6a"></div>
  <svg style="left:6px;top:5px" width="12" height="12" viewBox="0 0 12 12"><circle cx="7.5" cy="3.9" r="4.2" fill="url(#gs)"/>
      <circle cx="4.4" cy="7.1" r="3.7" fill="url(#gc)" stroke="#858585" stroke-width="0.9"/>
      <path d="M3 6.6 L4.4 7.1 L6 6" stroke="#606060" stroke-width="0.7" fill="none"/></svg>
  <div class="t" style="left:22.5px;top:6px;color:#0a7a42;-webkit-text-stroke:0">Clock, Language, and Region</div>
  <!-- caption buttons -->
  <div class="a" style="left:496px;top:10px;width:8px;height:1px;background:#0a7a40"></div>
  <div class="a" style="left:529px;top:7px;width:8px;height:7px;border:1px solid #0a7a40"></div>
  <svg style="left:563px;top:7px" width="9" height="8" viewBox="0 0 9 8"><path d="M0.5 0.2 L8.3 7.8 M8.3 0.2 L0.5 7.8" stroke="#0a7a40" stroke-width="1" fill="none"/></svg>

  <!-- nav -->
  <svg style="left:10px;top:30px" width="10" height="10" viewBox="0 0 10 10"><path d="M9.5 5 H1 M5 1 L1 5 L5 9" stroke="#808080" stroke-width="1.2" fill="none"/></svg>
  <svg style="left:32px;top:30px" width="10" height="10" viewBox="0 0 10 10"><path d="M0.5 5 H9 M5 1 L9 5 L5 9" stroke="#d0d0d0" stroke-width="1.1" fill="none"/></svg>
  <svg style="left:52px;top:33px" width="6" height="4" viewBox="0 0 6 4"><path d="M0.5 0.5 L3 3 L5.5 0.5" stroke="#808080" stroke-width="1" fill="none"/></svg>
  <svg style="left:65px;top:30px" width="10" height="10" viewBox="0 0 10 10"><path d="M5 9.5 V1 M1 5 L5 1 L9 5" stroke="#707070" stroke-width="1.3" fill="none"/></svg>
  <!-- address box -->
  <div class="a" style="left:80px;top:27px;width:336px;height:16px;border:1px solid #d9d9d9"></div>
  <div class="a" style="left:400px;top:28px;width:1px;height:14px;background:#e5e5e5"></div>
  <svg style="left:81px;top:28px" width="13.5" height="13.5" viewBox="0 0 12 12"><circle cx="6.7" cy="4.2" r="4.2" fill="url(#gs)"/>
      <circle cx="4.1" cy="7.1" r="3.6" fill="url(#gc)" stroke="#858585" stroke-width="0.9"/>
      <path d="M2.7 6.6 L4.1 7.1 L5.7 6" stroke="#606060" stroke-width="0.7" fill="none"/></svg>
  <svg style="left:99px;top:32px" width="4" height="6" viewBox="0 0 4 6"><path d="M0.5 0.5 L3 3 L0.5 5.5" stroke="#606060" stroke-width="0.9" fill="none"/></svg>
  <div class="t" style="left:109.5px;top:29px;color:#1a1a1a">Control Panel</div>
  <svg style="left:169px;top:32px" width="4" height="6" viewBox="0 0 4 6"><path d="M0.5 0.5 L3 3 L0.5 5.5" stroke="#606060" stroke-width="0.9" fill="none"/></svg>
  <div class="t" style="left:180px;top:29px;color:#1a1a1a">Clock, Language, and Region</div>
  <svg style="left:390px;top:34px" width="8" height="5" viewBox="0 0 8 5"><path d="M0.5 0.5 L4 4 L7.5 0.5" stroke="#606060" stroke-width="1" fill="none"/></svg>
  <svg style="left:404px;top:30px" width="9" height="10" viewBox="0 0 9 10"><path d="M6.8 3.2 A3.2 3.2 0 1 1 3.5 2.3" stroke="#606060" stroke-width="1.1" fill="none"/><path d="M2.6 0.3 L4.6 2.3 L2.6 4.3" stroke="#606060" stroke-width="1" fill="none"/></svg>
  <!-- search -->
  <div class="a" style="left:425px;top:27px;width:151px;height:16px;border:1px solid #d9d9d9"></div>
  <div class="t" style="left:431.5px;top:29.5px;color:#6d6d6d">Search Control Panel</div>
  <svg style="left:559px;top:30px" width="9" height="9" viewBox="0 0 9 9"><circle cx="5.5" cy="3.5" r="2.6" stroke="#505050" stroke-width="1" fill="none"/><path d="M3.6 5.4 L0.6 8.4" stroke="#505050" stroke-width="1.2"/></svg>

  <!-- links -->
  <div class="t" style="right:203.3px;top:79px;color:#0066cc;font-size:8.9px">Change the time zone</div>
  <div class="a" style="left:390px;top:78px;width:1px;height:11px;background:#d0d0d0"></div>
  <div class="t" style="left:398.5px;top:79px;color:#0066cc;font-size:8.9px">Add clocks for different time zones</div>
</div>

<!-- ============ region window ============ -->
<div class="a" style="left:9px;top:65px;width:359px;height:404px;background:#f0f0f0;box-shadow:0 0 7px rgba(0,0,0,0.35)">
  <div class="a" style="left:0;top:0;width:359px;height:23px;background:#00cc6a"></div>
  <svg style="left:6px;top:5px" width="12" height="12" viewBox="0 0 12 12"><circle cx="7" cy="3.6" r="3.9" fill="url(#gv)"/>
      <path d="M3.6 2.2 Q4.6 1.2 5.4 1.6 L4.8 3 Z" fill="#50d040"/>
      <path d="M10.4 3.6 Q11 4.6 10.6 5.6 L9.8 4.8 Z" fill="#70c040"/>
      <circle cx="3.5" cy="7.5" r="3.7" fill="url(#gc)" stroke="#c0c0c0" stroke-width="0.5"/>
      <path d="M3.5 5.6 V7.5 L4.7 7.9" stroke="#707888" stroke-width="0.6" fill="none"/></svg>
  <div class="t" style="left:22px;top:6.5px;color:#0a7a42;-webkit-text-stroke:0">Region</div>
  <svg style="left:343px;top:7px" width="9" height="8" viewBox="0 0 9 8"><path d="M0.5 0.2 L8.3 7.8 M8.3 0.2 L0.5 7.8" stroke="#0a7a40" stroke-width="1" fill="none"/></svg>
  <!-- tabs -->
  <div class="a" style="left:5px;top:43px;width:348px;height:334px;background:#fff;border:1px solid #dcdcdc"></div>
  <div class="a" style="left:43px;top:29px;width:39px;height:15px;border:1px solid #dcdcdc;border-bottom:none;background:#f0f0f0"></div>
  <div class="t" style="left:46.9px;top:32px;font-size:9.2px;transform:scaleX(0.854);transform-origin:0 0">Location</div>
  <div class="a" style="left:81px;top:29px;width:57px;height:15px;border:1px solid #dcdcdc;border-bottom:none;background:#f0f0f0"></div>
  <div class="t" style="left:86.4px;top:32px;font-size:9.2px;transform:scaleX(0.824);transform-origin:0 0">Administrative</div>
  <div class="a" style="left:5px;top:28px;width:39px;height:17px;border:1px solid #dcdcdc;border-bottom:none;background:#fff"></div>
  <div class="t" style="left:10.7px;top:30px;font-size:9.2px;transform:scaleX(0.788);transform-origin:0 0">Formats</div>

  <div class="t" style="left:16px;top:55px">Format: English (United States)</div>
  <div class="cb" style="left:16px;top:68px;width:200px;height:17px;line-height:17px;padding-left:2.5px">Match Windows display language (recommended)</div>
  <div class="t" style="left:16px;top:104px;color:#0066cc;text-decoration:underline">Language preferences</div>

  <div class="gb" style="left:16px;top:125px;width:330px;height:132px"></div>
  <div class="gl" style="left:22px;top:120px">Date and time formats</div>
  <div class="t" style="left:23px;top:140px">Short date:</div>
  <div class="cb" style="left:108px;top:137px;width:200px;height:16px;padding-left:2px;line-height:16px">M/d/yyyy</div>
  <div class="t" style="left:23px;top:161px">Long date:</div>
  <div class="cb" style="left:108px;top:158px;width:200px;height:16px;padding-left:2px;line-height:16px">dddd, MMMM d, yyyy</div>
  <div class="t" style="left:23px;top:182px">Short time:</div>
  <div class="cb" style="left:108px;top:178px;width:200px;height:16px;padding-left:2px;line-height:16px">h:mm tt</div>
  <div class="t" style="left:23px;top:203px">Long time:</div>
  <div class="cb" style="left:108px;top:199px;width:200px;height:16px;padding-left:2px;line-height:16px">h:mm:ss tt</div>
  <div class="t" style="left:23px;top:223px">First day of week:</div>
  <div class="cb" style="left:108px;top:220px;width:200px;height:16px;padding-left:2px;line-height:16px">Sunday</div>

  <div class="gb" style="left:16px;top:268px;width:330px;height:78px"></div>
  <div class="gl" style="left:22px;top:263px">Examples</div>
  <div class="t" style="left:23px;top:277px">Short date:</div>
  <div class="t" style="left:108.5px;top:277px">12/9/2015</div>
  <div class="t" style="left:23px;top:294px">Long date:</div>
  <div class="t" style="left:108.5px;top:294px">Wednesday, December 9, 2015</div>
  <div class="t" style="left:23px;top:310px">Short time:</div>
  <div class="t" style="left:108.5px;top:310px">7:06 AM</div>
  <div class="t" style="left:23px;top:327px">Long time:</div>
  <div class="t" style="left:108.5px;top:327px">7:06:14 AM</div>
</div>

<!-- ============ customize format ============ -->
<div class="a" style="left:152px;top:118px;width:345px;height:430px;background:#f0f0f0;border:1px solid #107c10;box-shadow:0 0 12px rgba(0,0,0,0.35)">
  <div class="a" style="left:0;top:0;width:343px;height:22px;background:#107c10"></div>
  <svg style="left:6px;top:5px" width="12" height="12" viewBox="0 0 12 12"><circle cx="7" cy="3.6" r="3.9" fill="url(#gv)"/>
      <path d="M3.6 2.2 Q4.6 1.2 5.4 1.6 L4.8 3 Z" fill="#50d040"/>
      <path d="M10.4 3.6 Q11 4.6 10.6 5.6 L9.8 4.8 Z" fill="#70c040"/>
      <circle cx="3.5" cy="7.5" r="3.7" fill="url(#gc)" stroke="#c0c0c0" stroke-width="0.5"/>
      <path d="M3.5 5.6 V7.5 L4.7 7.9" stroke="#707888" stroke-width="0.6" fill="none"/></svg>
  <div class="t" style="left:21.5px;top:6px;color:#fff">Customize Format</div>
  <svg style="left:327.5px;top:7px" width="9" height="9" viewBox="0 0 9 9"><path d="M0.5 0.5 L8.5 8.5 M8.5 0.5 L0.5 8.5" stroke="#fff" stroke-width="1.1" fill="none"/></svg>

  <!-- tabs -->
  <div class="a" style="left:5px;top:42px;width:332px;height:359px;background:#fff;border:1px solid #dcdcdc"></div>
  <div class="a" style="left:6px;top:29px;width:40px;height:14px;border:1px solid #dcdcdc;border-bottom:none;background:#f0f0f0"></div>
  <div class="t" style="left:9.699999999999989px;top:31.5px;font-size:9.2px;transform:scaleX(0.838);transform-origin:0 0">Numbers</div>
  <div class="a" style="left:45px;top:29px;width:43px;height:14px;border:1px solid #dcdcdc;border-bottom:none;background:#f0f0f0"></div>
  <div class="t" style="left:49.5px;top:31.5px;font-size:9.2px;transform:scaleX(0.889);transform-origin:0 0">Currency</div>
  <div class="a" style="left:87px;top:29px;width:31px;height:14px;border:1px solid #dcdcdc;border-bottom:none;background:#f0f0f0"></div>
  <div class="t" style="left:92.1px;top:31.5px;font-size:9.2px;transform:scaleX(0.781);transform-origin:0 0">Time</div>
  <div class="a" style="left:117px;top:27px;width:34px;height:17px;border:1px solid #dcdcdc;border-bottom:none;background:#fff"></div>
  <div class="t" style="left:122.80000000000001px;top:29.5px;font-size:9.2px;transform:scaleX(0.874);transform-origin:0 0">Date</div>

  <!-- Example -->
  <div class="gb" style="left:14px;top:59px;width:316px;height:66px"></div>
  <div class="gl" style="left:19.5px;top:54.5px">Example</div>
  <div class="t" style="left:24.5px;top:73px">Short date:</div>
  <div class="tb" style="left:107px;top:70px;width:145px;height:19px;line-height:16px">12/9/2015</div>
  <div class="t" style="left:24.5px;top:96px">Long date:</div>
  <div class="tb" style="left:107px;top:93px;width:145px;height:19px;line-height:16px">Wednesday, December 9, 2015</div>

  <!-- Date formats -->
  <div class="gb" style="left:14px;top:140px;width:316px;height:92px"></div>
  <div class="gl" style="left:19.5px;top:135.5px">Date formats</div>
  <div class="t" style="left:24.5px;top:152px">Short date:</div>
  <div class="a" style="left:107px;top:149px;width:211px;height:17px;border:1px solid #0078d7;background:#fff"></div>
  <div class="t" style="left:112px;top:152px">ddd, d MMM yyyy</div>
  <svg style="left:308px;top:155px" width="8" height="5" viewBox="0 0 8 5"><path d="M0.5 0.5 L4 4 L7.5 0.5" stroke="#404040" stroke-width="1" fill="none"/></svg>
  <div class="t" style="left:24.5px;top:177.5px">Long date:</div>
  <div class="a" style="left:107px;top:173px;width:211px;height:17px;border:1px solid #9a9a9a;background:#fff"></div>
  <div class="t" style="left:112px;top:177px">dddd, MMMM d, yyyy</div>
  <svg style="left:308px;top:179px" width="8" height="5" viewBox="0 0 8 5"><path d="M0.5 0.5 L4 4 L7.5 0.5" stroke="#404040" stroke-width="1" fill="none"/></svg>
  <div class="t" style="left:24.5px;top:200px">What the notations mean:</div>
  <div class="t" style="left:24.5px;top:211px;font-size:8.95px">d, dd = day;&nbsp; ddd, dddd = day of week;&nbsp; M = month;&nbsp; y = year</div>

  <!-- Calendar -->
  <div class="gb" style="left:14px;top:249px;width:316px;height:112px"></div>
  <div class="gl" style="left:19.5px;top:244.5px">Calendar</div>
  <div class="t" style="left:24.5px;top:260px">When a two-digit year is entered, interpret it as a year between:</div>
  <div class="tb" style="left:31px;top:274px;width:47px;height:17px;border-color:#cccccc;color:#838383;line-height:14px">1930</div>
  <div class="t" style="left:83.5px;top:278px">and</div>
  <div class="tb" style="left:107px;top:274px;width:49px;height:17px;line-height:14px;padding-left:3px">2029</div>
  <div class="a" style="left:143px;top:275px;width:12px;height:15px;background:#f0f0f0;border-left:1px solid #d0d0d0"></div>
  <div class="a" style="left:143.5px;top:275.5px;width:11px;height:7px;border:1px solid #adadad;background:#e5e5e5"></div>
  <div class="a" style="left:143.5px;top:282.5px;width:11px;height:7px;border:1px solid #adadad;background:#e5e5e5"></div>
  <svg style="left:146px;top:277px" width="6" height="3" viewBox="0 0 6 3"><path d="M0.5 3 L3 0.2 L5.5 3Z" fill="#303030"/></svg>
  <svg style="left:146px;top:285px" width="6" height="3" viewBox="0 0 6 3"><path d="M0.5 0 L3 2.8 L5.5 0Z" fill="#303030"/></svg>
  <div class="t" style="left:24.5px;top:300px">First day of week:</div>
  <div class="cb" style="left:107px;top:297px;width:211px;height:17px;line-height:14px;padding-left:4px">Sunday</div>
  <svg style="left:308px;top:304px" width="8" height="5" viewBox="0 0 8 5"><path d="M0.5 0.5 L4 4 L7.5 0.5" stroke="#606060" stroke-width="1" fill="none"/></svg>

  <div class="t" style="left:16.5px;top:375px">Click Reset to restore the system default settings for</div>
  <div class="t" style="left:16.5px;top:386px">numbers, currency, time, and date.</div>
  <div class="btn" style="left:263px;top:375px;width:64px;height:17px;line-height:16px">Reset</div>

  <div class="btn" style="left:163px;top:407px;width:54px;height:15px;border-color:#0078d7">OK</div>
  <div class="btn" style="left:223px;top:407px;width:54px;height:15px">Cancel</div>
  <div class="btn" style="left:283px;top:407px;width:55px;height:15px">Apply</div>
</div>

</body></html>
